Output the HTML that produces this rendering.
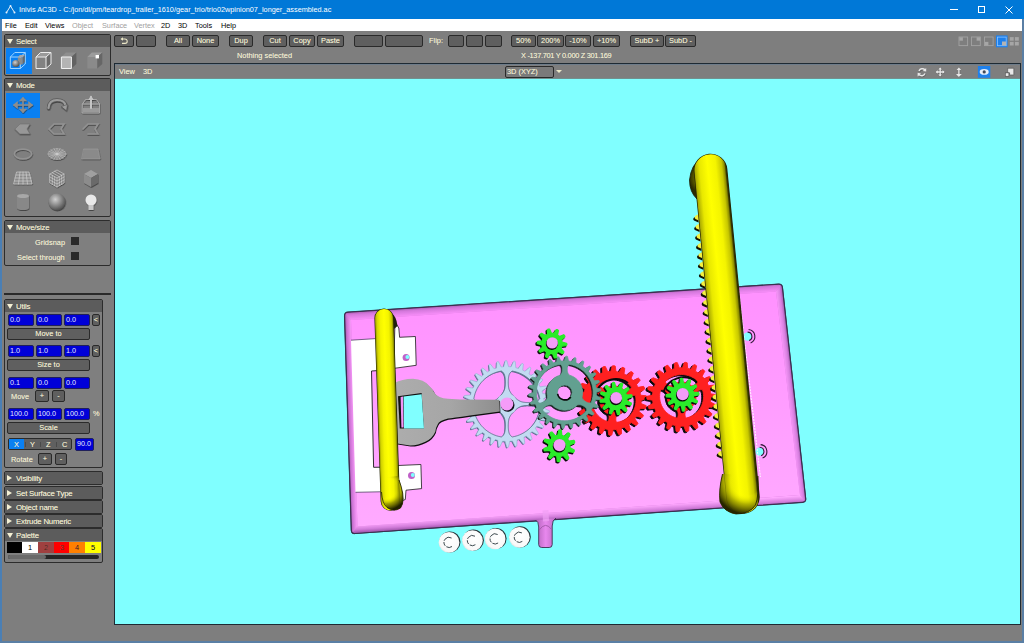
<!DOCTYPE html>
<html><head><meta charset="utf-8">
<style>
*{margin:0;padding:0;box-sizing:border-box}
html,body{width:1024px;height:643px;overflow:hidden;background:#7e7e7e;font-family:"Liberation Sans",sans-serif}
.a{position:absolute}
#title{left:0;top:0;width:1024px;height:19px;background:#0078d7;color:#fff;font-size:7.3px}
#menu{left:1px;top:19px;width:1021px;height:12px;background:#fff;font-size:7.3px;color:#000}
#menu span{position:absolute;top:2px}
#menu .d{color:#a0a0a0}
.bl{left:0;top:19px;width:2px;height:624px;background:#4a7fb5}
.br{left:1022px;top:19px;width:2px;height:624px;background:#5a7fa5}
.bb{left:0;top:641px;width:1024px;height:2px;background:#5a7fa5}
.btn{position:absolute;height:12px;top:35px;background:#5f5f5f;border:1px solid #2a2a2a;border-radius:2px;color:#f0ecd0;font-size:7.4px;text-align:center;line-height:10px;text-shadow:0 0 0.5px rgba(240,236,208,0.6)}
.t{position:absolute;color:#f0ecd0;font-size:7.4px;white-space:pre;line-height:9px;text-shadow:0 0 0.5px rgba(240,236,208,0.6)}
.pnl{position:absolute;left:4px;width:107px;background:#7f7f7f;border:1px solid #2c2c2c;border-radius:2px}
.hd{position:absolute;left:0;top:0;right:0;height:12px;background:#5c5c5c;color:#f0ecd0;font-size:7.8px;letter-spacing:-0.2px;text-shadow:0 0 0.5px rgba(240,236,208,0.6)}
.hd .tri{position:absolute;left:2px;top:4px;width:0;height:0;border-left:3px solid transparent;border-right:3px solid transparent;border-top:5px solid #f4f0d4}
.hd .trr{position:absolute;left:2px;top:2.5px;width:0;height:0;border-top:3.5px solid transparent;border-bottom:3.5px solid transparent;border-left:5.5px solid #f4f0d4}
.hd span{position:absolute;left:11px;top:1.5px;line-height:9px}
.fld{position:absolute;height:12px;background:#0000d8;border:1px solid #20205a;border-radius:2px;color:#e8e8ff;font-size:7.2px;line-height:10px;padding-left:1px}
.ub{position:absolute;height:12px;background:#5f5f5f;border:1px solid #2a2a2a;border-radius:2px;color:#f0ecd0;font-size:7.4px;text-align:center;line-height:10px;text-shadow:0 0 0.5px rgba(240,236,208,0.6)}
</style></head><body>
<div id="title" class="a">
  <svg class="a" style="left:5px;top:4px" width="11" height="10" viewBox="0 0 11 10"><path d="M1.5 8.5 L5.5 2 L9.5 8.5" fill="none" stroke="#e6f0fa" stroke-width="1"/><circle cx="5.5" cy="2" r="1" fill="#e6f0fa"/><circle cx="1.5" cy="8.5" r="1" fill="#e6f0fa"/><circle cx="9.5" cy="8.5" r="1" fill="#e6f0fa"/></svg>
  <span class="a" style="left:19px;top:5px;line-height:9px">Inivis AC3D - C:/jon/dl/pm/teardrop_trailer_1610/gear_trio/trio02wpinion07_longer_assembled.ac</span>
  <div class="a" style="left:950px;top:9px;width:7.5px;height:1px;background:#fff"></div>
  <div class="a" style="left:977.5px;top:6px;width:7px;height:7px;border:1px solid #fff"></div>
  <svg class="a" style="left:1005px;top:5.5px" width="8" height="8" viewBox="0 0 8 8"><path d="M0.5 0.5L7.5 7.5M7.5 0.5L0.5 7.5" stroke="#fff" stroke-width="1"/></svg>
</div>
<div id="menu" class="a">
  <span style="left:4px">File</span><span style="left:24px">Edit</span><span style="left:44px">Views</span><span class="d" style="left:71px">Object</span><span class="d" style="left:101px">Surface</span><span class="d" style="left:133px">Vertex</span><span style="left:160px">2D</span><span style="left:177px">3D</span><span style="left:194px">Tools</span><span style="left:220px">Help</span>
</div>
<div class="a bl"></div><div class="a br"></div><div class="a bb"></div>

<!-- toolbar -->
<div class="btn" style="left:114px;width:20px"><svg width="18" height="10" viewBox="0 0 18 10"><path d="M6.5 3 H10 A2.2 2.2 0 0 1 10 7.4 H7" fill="none" stroke="#ece8c8" stroke-width="1.1"/><path d="M5.5 3 L8 1.2 L8 4.8Z" fill="#ece8c8"/></svg></div>
<div class="btn" style="left:136px;width:20px"></div>
<div class="btn" style="left:166px;width:24px">All</div>
<div class="btn" style="left:192px;width:27px">None</div>
<div class="btn" style="left:229px;width:24px">Dup</div>
<div class="btn" style="left:263px;width:24px">Cut</div>
<div class="btn" style="left:289px;width:26px">Copy</div>
<div class="btn" style="left:317px;width:27px">Paste</div>
<div class="btn" style="left:354px;width:29px"></div>
<div class="btn" style="left:385px;width:38px"></div>
<div class="t" style="left:429px;top:36px">Flip:</div>
<div class="btn" style="left:448px;width:16px"></div>
<div class="btn" style="left:466px;width:17px"></div>
<div class="btn" style="left:485px;width:17px"></div>
<div class="btn" style="left:511px;width:25px">50%</div>
<div class="btn" style="left:537px;width:27px">200%</div>
<div class="btn" style="left:565px;width:26px">-10%</div>
<div class="btn" style="left:593px;width:27px">+10%</div>
<div class="btn" style="left:630px;width:34px">SubD +</div>
<div class="btn" style="left:665px;width:31px">SubD -</div>
<div class="t" style="left:237px;top:51px">Nothing selected</div>
<div class="t" style="left:521px;top:51px;letter-spacing:-0.3px">X -137.701 Y 0.000 Z 301.169</div>

<!-- layout icons -->
<svg class="a" style="left:950px;top:32px" width="74" height="18" viewBox="950 32 74 18">
 <g fill="none" stroke="#a2a2a2" stroke-width="0.9">
  <rect x="959" y="37" width="8.6" height="8.6"/>
  <rect x="971.5" y="37" width="8.8" height="8.6"/>
  <rect x="984.5" y="37" width="8.6" height="8.6"/>
 </g>
 <g fill="#a6a6a6">
  <rect x="959.3" y="37.3" width="3.6" height="3.4"/>
  <rect x="976.6" y="37.3" width="3.6" height="3.4"/>
  <rect x="984.8" y="41.9" width="3.6" height="3.6"/>
 </g>
 <rect x="996" y="35.4" width="11.6" height="11.9" fill="#1e80ec"/>
 <rect x="997.6" y="37.1" width="8.6" height="8.6" fill="none" stroke="#8cc4ff" stroke-width="0.8"/>
 <rect x="1002" y="41.5" width="4" height="4" fill="#b4b4b4"/>
 <g fill="#a6a6a6">
  <rect x="1009.8" y="37.1" width="3.9" height="3.6"/>
  <rect x="1014.9" y="37.1" width="3.9" height="3.6"/>
  <rect x="1009.8" y="41.9" width="3.9" height="3.6"/>
  <rect x="1014.9" y="41.9" width="3.9" height="3.6"/>
 </g>
</svg>



<!-- left panels -->
<!-- Select panel -->
<div class="pnl" style="top:34px;height:42px"><div class="hd"><div class="tri"></div><span>Select</span></div></div>
<div class="a" style="left:6px;top:48px;width:26px;height:26px;background:#0a80f2"></div>
<svg class="a" style="left:6px;top:48px" width="104" height="26" viewBox="0 0 104 26">
 <defs>
  <linearGradient id="cf" x1="0" y1="0" x2="1" y2="1"><stop offset="0" stop-color="#9a9a9a"/><stop offset="1" stop-color="#6a6a6a"/></linearGradient>
  <linearGradient id="cs" x1="0" y1="0" x2="1" y2="0"><stop offset="0" stop-color="#8a8a8a"/><stop offset="1" stop-color="#5a5a5a"/></linearGradient>
  <radialGradient id="sph" cx="0.4" cy="0.35" r="0.65"><stop offset="0" stop-color="#d0d0d0"/><stop offset="1" stop-color="#505050"/></radialGradient>
 </defs>
 <g transform="translate(12.8,12.5)">
  <path d="M-8.5 -3.5 L1.5 -3.5 L1.5 8 L-8.5 8Z M-8.5 -3.5 L-4 -8 L6.5 -8 L1.5 -3.5 M1.5 8 L6.5 3.5 L6.5 -8" fill="none" stroke="#9fd4ff" stroke-width="1"/>
  <path d="M-1 -3 L4 -3 L4 4 L-1 4Z" fill="#8c8c8c"/><path d="M-1 -3 L1 -5.5 L6 -5.5 L4 -3Z" fill="#a8a8a8"/><path d="M4 -3 L6 -5.5 L6 1.5 L4 4Z" fill="#6a6a6a"/>
  <circle cx="-3" cy="3" r="3.6" fill="url(#sph)"/>
 </g>
 <g transform="translate(38.5,12.5)">
  <path d="M-8.5 -3.5 L1.5 -3.5 L1.5 8 L-8.5 8Z" fill="#828282"/>
  <path d="M-8.5 -3.5 L-4 -8 L6.5 -8 L1.5 -3.5Z" fill="#9a9a9a"/>
  <path d="M1.5 -3.5 L6.5 -8 L6.5 3.5 L1.5 8Z" fill="#6a6a6a"/>
  <path d="M-8.5 -3.5 L1.5 -3.5 L1.5 8 L-8.5 8Z M-8.5 -3.5 L-4 -8 L6.5 -8 L1.5 -3.5 M1.5 8 L6.5 3.5 L6.5 -8" fill="none" stroke="#eeeeee" stroke-width="1" stroke-linejoin="round"/>
 </g>
 <g transform="translate(63.9,12.5)">
  <path d="M-8.5 -3.5 L-4 -8 L6.5 -8 L1.5 -3.5Z" fill="#8e8e8e"/>
  <path d="M1.5 -3.5 L6.5 -8 L6.5 3.5 L1.5 8Z" fill="#626262"/>
  <path d="M-8.5 -3.5 L1.5 -3.5 L1.5 8 L-8.5 8Z" fill="#b4b4b4" stroke="#f2f2f2" stroke-width="1"/>
 </g>
 <g transform="translate(89.8,12.5)">
  <path d="M-8.5 -3.5 L1.5 -3.5 L1.5 8 L-8.5 8Z" fill="#8a8a8a"/>
  <path d="M-8.5 -3.5 L-4 -8 L6.5 -8 L1.5 -3.5Z" fill="#9c9c9c"/>
  <path d="M1.5 -3.5 L6.5 -8 L6.5 3.5 L1.5 8Z" fill="#666"/>
  <rect x="-0.2" y="-5.5" width="3.4" height="3.4" fill="#fff"/>
 </g>
</svg>

<!-- Mode panel -->
<div class="pnl" style="top:78px;height:139px"><div class="hd"><div class="tri"></div><span>Mode</span></div></div>
<div class="a" style="left:6px;top:93px;width:34px;height:25px;background:#0a80f2"></div>
<svg class="a" style="left:4px;top:91px" width="106" height="124" viewBox="0 0 106 124">
 <defs><filter id="ds" x="-10%" y="-10%" width="120%" height="120%"><feDropShadow dx="0.4" dy="0.9" stdDeviation="0.5" flood-color="#2a2a2a" flood-opacity="0.75"/></filter></defs>
 <g fill="none" stroke-linecap="round" filter="url(#ds)">
 <!-- row1 -->
 <g transform="translate(19,14)" stroke="#8e8e8e" stroke-width="1.5">
   <path d="M-9 0 H9 M0 -7 V7"/>
   <path d="M-9 0 L-6 -2.5 L-6 2.5Z M9 0 L6 -2.5 L6 2.5Z M0 -7 L-2.5 -4.5 L2.5 -4.5Z M0 7 L-2.5 4.5 L2.5 4.5Z" fill="#8e8e8e"/>
 </g>
 <g transform="translate(53,14)">
   <path d="M-8.5 3 Q-8 -5 0 -5 Q8 -5 8.5 1" fill="none" stroke="#5a5a5a" stroke-width="3.4" stroke-linecap="round"/>
   <path d="M-8.5 3 Q-8 -5 0 -5 Q8 -5 8.5 1" fill="none" stroke="#9c9c9c" stroke-width="2.2" stroke-linecap="round"/>
   <path d="M4.5 1.5 L10.5 -0.5 L9.5 5.5Z" fill="#9c9c9c" stroke="#5a5a5a" stroke-width="0.6"/>
 </g>
 <g transform="translate(87,14)">
   <path d="M-8.5 -1 L-5.5 -5.5 L5.5 -5.5 L8.5 -1 L8.5 8 L-8.5 8Z" fill="none" stroke="#b4b4b4" stroke-width="0.8"/>
   <path d="M-8.5 -1 L8.5 -1" stroke="#b4b4b4" stroke-width="0.8"/>
   <path d="M-8 3 L8 3 L8 7.6 L-8 7.6Z" fill="#9a9a9a"/>
   <path d="M0 -8 V3" stroke="#c4c4c4" stroke-width="2" fill="none"/>
   <path d="M-2.8 -5 L0 -9.5 L2.8 -5Z" fill="#c4c4c4"/>
 </g>
 <!-- row2 -->
 <g transform="translate(19,38)">
   <path d="M-8 0 L-3 -5 L7 -5 L4 0 L7 5 L-3 5Z" fill="#979797" stroke="#707070" stroke-width="0.6"/>
 </g>
 <g transform="translate(53,38)" stroke="#929292" stroke-width="1.7">
   <path d="M-8 0 L-3 -5 L7 -5 L4 0 L7 5 L-3 5Z"/>
 </g>
 <g transform="translate(87,38)" stroke="#929292" stroke-width="1.7">
   <path d="M-8 0 L-3 -5 L7 -5 L4 0 L7 5 L-3 5"/>
 </g>
 <!-- row3 -->
 <ellipse cx="19" cy="63" rx="8.6" ry="4.8" stroke="#929292" stroke-width="1.7"/>
 <g transform="translate(53,63)">
   <ellipse rx="9" ry="5.5" fill="#8a8a8a" stroke="#a8a8a8" stroke-width="0.6"/>
   <path d="M-9 0H9M0 -5.5V5.5M-6 -4L6 4M-6 4L6 -4M-8 -2.5L8 2.5M-8 2.5L8 -2.5M-3 -5.3L3 5.3M3 -5.3L-3 5.3" stroke="#d0d0d0" stroke-width="0.5"/>
 </g>
 <path d="M80 58 L94 58 L96 68 L78 68Z" fill="#8a8a8a" stroke="#a0a0a0" stroke-width="0.6"/>
 <!-- row4 -->
 <g transform="translate(19,87)" stroke="#d8d8d8" stroke-width="0.6">
   <path d="M-6 -6 L6 -6 L9 6 L-9 6Z" fill="#8a8a8a"/>
   <path d="M-3 -6 L-4.5 6 M0 -6 V6 M3 -6 L4.5 6 M-7 -3 H7 M-8 0 H8 M-8.5 3 H8.5"/>
 </g>
 <g transform="translate(53,87)" stroke="#d8d8d8" stroke-width="0.6">
   <path d="M-7 -4 L0 -8 L7 -4 L7 5 L0 9 L-7 5Z" fill="#7a7a7a"/>
   <path d="M-7 -4 L0 0 L7 -4 M0 0 V9 M-4.7 -5.3 L2.3 -1.3 L2.3 7.7 M-2.3 -6.7 L4.7 -2.7 M-7 -1 L0 3 L7 -1 M-7 2 L0 6 L7 2 M-4.7 -2.7 V6.3 M-2.3 -1.3 V7.7 M4.7 -2.7 V6.3"/>
 </g>
 <g transform="translate(87,87)">
   <path d="M-7 -4 L0 -8 L7 -4 L0 0Z" fill="#a0a0a0"/>
   <path d="M7 -4 L0 0 L0 9 L7 5Z" fill="#6a6a6a"/>
   <path d="M-7 -4 L0 0 L0 9 L-7 5Z" fill="#8c8c8c"/>
 </g>
 <!-- row5 -->
 <g transform="translate(19,111)">
   <path d="M-6 -6 V6 A6 2 0 0 0 6 6 V-6Z" fill="#888"/>
   <ellipse cy="-6" rx="6" ry="2" fill="#a8a8a8"/>
 </g>
 <circle cx="53" cy="111" r="8.5" fill="url(#sph)"/>
 <g transform="translate(87,111)">
   <circle cy="-2" r="5.5" fill="#e8e8e8"/>
   <rect x="-2.5" y="3" width="5" height="5" fill="#c8c8c8"/>
 </g>
 </g>
</svg>

<!-- Move/size panel -->
<div class="pnl" style="top:220px;height:46px"><div class="hd"><div class="tri"></div><span>Move/size</span></div></div>
<div class="t" style="left:35px;top:238px">Gridsnap</div>
<div class="a" style="left:71px;top:237px;width:8px;height:8px;background:#2a2a2a"></div>
<div class="t" style="left:17px;top:253px">Select through</div>
<div class="a" style="left:71px;top:252px;width:8px;height:8px;background:#2a2a2a"></div>

<div class="a" style="left:4px;top:293px;width:107px;height:2px;background:#2a2a2a"></div>

<!-- Utils -->
<div class="pnl" style="top:299px;width:99px;height:169px"><div class="hd"><div class="tri"></div><span>Utils</span></div></div>
<div class="fld" style="left:8px;top:314px;width:26px">0.0</div>
<div class="fld" style="left:36px;top:314px;width:26px">0.0</div>
<div class="fld" style="left:64px;top:314px;width:26px">0.0</div>
<div class="ub" style="left:92px;top:314px;width:8px">&lt;</div>
<div class="ub" style="left:7px;top:328px;width:83px">Move to</div>
<div class="fld" style="left:8px;top:345px;width:26px">1.0</div>
<div class="fld" style="left:36px;top:345px;width:26px">1.0</div>
<div class="fld" style="left:64px;top:345px;width:26px">1.0</div>
<div class="ub" style="left:92px;top:345px;width:8px">&lt;</div>
<div class="ub" style="left:7px;top:359px;width:83px">Size to</div>
<div class="fld" style="left:8px;top:377px;width:26px">0.1</div>
<div class="fld" style="left:36px;top:377px;width:26px">0.0</div>
<div class="fld" style="left:64px;top:377px;width:26px">0.0</div>
<div class="t" style="left:11px;top:392px">Move</div>
<div class="ub" style="left:35px;top:390px;width:14px">+</div>
<div class="ub" style="left:52px;top:390px;width:13px">-</div>
<div class="fld" style="left:8px;top:408px;width:26px">100.0</div>
<div class="fld" style="left:36px;top:408px;width:26px">100.0</div>
<div class="fld" style="left:64px;top:408px;width:26px">100.0</div>
<div class="t" style="left:93px;top:409px">%</div>
<div class="ub" style="left:7px;top:422px;width:83px">Scale</div>
<div class="ub" style="left:8px;top:438px;width:64px;background:#606060"></div>
<div class="a" style="left:9px;top:439px;width:15px;height:10px;background:#0a80f2"></div>
<div class="t" style="left:14px;top:440px">X</div>
<div class="t" style="left:30px;top:440px">Y</div>
<div class="t" style="left:46px;top:440px">Z</div>
<div class="t" style="left:62px;top:440px">C</div>
<div class="a" style="left:25px;top:442px;width:1px;height:5px;background:#4a4a4a"></div>
<div class="a" style="left:40px;top:442px;width:1px;height:5px;background:#4a4a4a"></div>
<div class="a" style="left:56px;top:442px;width:1px;height:5px;background:#4a4a4a"></div>
<div class="fld" style="left:75px;top:438px;width:19px;height:13px">90.0</div>
<div class="t" style="left:11px;top:455px">Rotate</div>
<div class="ub" style="left:38px;top:453px;width:14px">+</div>
<div class="ub" style="left:55px;top:453px;width:12px">-</div>

<!-- collapsed panels -->
<div class="pnl" style="top:471px;width:99px;height:14px;background:#5c5c5c"><div class="hd" style="height:12px"><div class="trr"></div><span>Visibility</span></div></div>
<div class="pnl" style="top:486px;width:99px;height:14px;background:#5c5c5c"><div class="hd" style="height:12px"><div class="trr"></div><span>Set Surface Type</span></div></div>
<div class="pnl" style="top:500px;width:99px;height:14px;background:#5c5c5c"><div class="hd" style="height:12px"><div class="trr"></div><span>Object name</span></div></div>
<div class="pnl" style="top:514px;width:99px;height:14px;background:#5c5c5c"><div class="hd" style="height:12px"><div class="trr"></div><span>Extrude Numeric</span></div></div>
<div class="pnl" style="top:528px;width:99px;height:35px"><div class="hd"><div class="tri"></div><span>Palette</span></div></div>
<div class="a" style="left:7px;top:542px;width:15px;height:11px;background:#000"></div>
<div class="a" style="left:22px;top:542px;width:16px;height:11px;background:#fff"></div>
<div class="a" style="left:38px;top:542px;width:16px;height:11px;background:#a04040"></div>
<div class="a" style="left:54px;top:542px;width:15px;height:11px;background:#ff0000"></div>
<div class="a" style="left:69px;top:542px;width:16px;height:11px;background:#ff8000"></div>
<div class="a" style="left:85px;top:542px;width:16px;height:11px;background:#ffff00"></div>
<div class="t" style="left:28px;top:543px;color:#000">1</div>
<div class="t" style="left:44px;top:543px;color:#400">2</div>
<div class="t" style="left:60px;top:543px;color:#600">3</div>
<div class="t" style="left:75px;top:543px;color:#400">4</div>
<div class="t" style="left:91px;top:543px;color:#000">5</div>
<div class="a" style="left:8px;top:555px;width:91px;height:4px;background:#262626;border-radius:2px"></div>
<div class="a" style="left:8px;top:555px;width:38px;height:4px;background:#6a6a6a;border-radius:2px"></div>


<!-- viewport -->
<div class="a" style="left:114px;top:63px;width:907px;height:562px;border:1px solid #1e2a33;background:#80ffff">
  <div class="a" style="left:0;top:0;width:905px;height:15px;background:#7e7e7e;border-top:1px solid #6e7c8a;border-bottom:1px solid #72908e"></div>
</div>
<div class="t" style="left:119px;top:67px">View</div>
<div class="t" style="left:143px;top:67px">3D</div>
<div class="a" style="left:505px;top:66px;width:49px;height:12px;background:#7a7a7a;border:1px solid #2a2a2a;border-radius:2px"></div>
<div class="t" style="left:507px;top:67px">3D (XYZ)</div>
<div class="a" style="left:556px;top:70px;width:0;height:0;border-left:3px solid transparent;border-right:3px solid transparent;border-top:3px solid #ece8c8"></div>

<svg class="a" style="left:910px;top:64px" width="110" height="15" viewBox="910 64 110 15">
 <g fill="none" stroke="#404040" stroke-width="1.9" opacity="0.5" transform="translate(0.4,0.6)">
  <path d="M919 71 A3.6 3.6 0 0 1 925 70 M925 73.5 A3.6 3.6 0 0 1 919 74.5"/>
  <path d="M936.4 72 H944 M940.2 68.2 V75.8"/>
  <path d="M958.9 68.5 V76"/>
 </g>
 <g fill="none" stroke="#e8e8e8" stroke-width="1.5">
  <path d="M919 71 A3.6 3.6 0 0 1 925 70"/>
  <path d="M925 73.5 A3.6 3.6 0 0 1 919 74.5"/>
  <path d="M936.4 72 H944 M940.2 68.2 V75.8" stroke-width="1.3"/>
  <path d="M958.9 69 V75.5" stroke-width="1.4"/>
 </g>
 <g fill="#e8e8e8">
  <path d="M926.2 67.9 L926.2 71.6 L922.7 71Z"/>
  <path d="M917.6 76.4 L917.6 72.7 L921 73.4Z"/>
  <path d="M935.8 72 L937.8 70.3 L937.8 73.7Z M944.6 72 L942.6 70.3 L942.6 73.7Z M940.2 67.6 L938.5 69.6 L941.9 69.6Z M940.2 76.4 L938.5 74.4 L941.9 74.4Z"/>
  <path d="M958.9 67.6 L956.6 70 L961.2 70Z M958.9 77 L956 74 L961.8 74Z"/>
 </g>
 <rect x="977.9" y="66" width="12.4" height="11.8" fill="#1e80ec"/>
 <ellipse cx="984.2" cy="71.9" rx="4.5" ry="2.8" fill="#e8eef8"/>
 <circle cx="984.2" cy="71.9" r="1.6" fill="#404858"/>
 <g fill="#e8e8e8" stroke="#3a3a3a" stroke-width="0.5">
  <path d="M1007.7 68.3 H1013.8 V74.9 H1009.6 V72.8 H1007.7Z"/>
  <rect x="1005.3" y="72.9" width="3.6" height="3.3"/>
 </g>
</svg>
<svg class="a" style="left:0;top:0" width="1024" height="643" viewBox="0 0 1024 643"><defs>
<linearGradient id="gTop" gradientUnits="userSpaceOnUse" x1="560" y1="298" x2="560.6" y2="307"><stop offset="0" stop-color="#a85cb0"/><stop offset="0.3" stop-color="#d478dc"/><stop offset="1" stop-color="#ff92ff"/></linearGradient>
<linearGradient id="gLeft" gradientUnits="userSpaceOnUse" x1="347.8" y1="420" x2="354.5" y2="419.8"><stop offset="0" stop-color="#a458b0"/><stop offset="0.3" stop-color="#cc74d4"/><stop offset="1" stop-color="#ff9eff"/></linearGradient>
<linearGradient id="gBot" gradientUnits="userSpaceOnUse" x1="578" y1="517.9" x2="577.5" y2="510.2"><stop offset="0" stop-color="#a85cb4"/><stop offset="0.35" stop-color="#d27cda"/><stop offset="1" stop-color="#ffa8ff"/></linearGradient>
<linearGradient id="gRight" gradientUnits="userSpaceOnUse" x1="794" y1="393" x2="787" y2="393.8"><stop offset="0" stop-color="#a85cb4"/><stop offset="0.35" stop-color="#d880e0"/><stop offset="1" stop-color="#ff9cff"/></linearGradient>
<linearGradient id="hL" gradientUnits="userSpaceOnUse" x1="377.9" y1="409.8" x2="396.5" y2="409.2"><stop offset="0" stop-color="#8a8a00"/><stop offset="0.1" stop-color="#d4d400"/><stop offset="0.28" stop-color="#f4f400"/><stop offset="0.48" stop-color="#ffff00"/><stop offset="0.72" stop-color="#f4f400"/><stop offset="0.88" stop-color="#cccc00"/><stop offset="0.96" stop-color="#8a8a00"/><stop offset="1" stop-color="#404000"/></linearGradient>
<linearGradient id="hR" gradientUnits="userSpaceOnUse" x1="709.4" y1="335.6" x2="742" y2="332.4"><stop offset="0" stop-color="#606000"/><stop offset="0.06" stop-color="#b0b000"/><stop offset="0.2" stop-color="#e8e800"/><stop offset="0.45" stop-color="#ffff00"/><stop offset="0.7" stop-color="#f4f400"/><stop offset="0.88" stop-color="#c8c800"/><stop offset="0.96" stop-color="#8a8a00"/><stop offset="1" stop-color="#303000"/></linearGradient>
<radialGradient id="rbTop" gradientUnits="userSpaceOnUse" cx="706" cy="178" r="17"><stop offset="0" stop-color="#c8c800"/><stop offset="0.6" stop-color="#6a6a00"/><stop offset="1" stop-color="#2a2a00"/></radialGradient>
<radialGradient id="rbBot" gradientUnits="userSpaceOnUse" cx="747" cy="481" r="33"><stop offset="0" stop-color="#ffff00" stop-opacity="0"/><stop offset="0.42" stop-color="#ffff00" stop-opacity="0"/><stop offset="0.7" stop-color="#a0a000" stop-opacity="0.8"/><stop offset="1" stop-color="#262600"/></radialGradient>
<radialGradient id="lbBot" gradientUnits="userSpaceOnUse" cx="386" cy="488" r="22"><stop offset="0" stop-color="#ffff00" stop-opacity="0"/><stop offset="0.45" stop-color="#ffff00" stop-opacity="0"/><stop offset="0.72" stop-color="#909000" stop-opacity="0.85"/><stop offset="1" stop-color="#202000"/></radialGradient>
<linearGradient id="face" gradientUnits="userSpaceOnUse" x1="0" y1="300" x2="0" y2="525"><stop offset="0" stop-color="#ff92ff"/><stop offset="1" stop-color="#ffaaff"/></linearGradient>
<linearGradient id="wrg" gradientUnits="userSpaceOnUse" x1="400" y1="0" x2="500" y2="0"><stop offset="0" stop-color="#acacac"/><stop offset="0.5" stop-color="#a6a6a6"/><stop offset="1" stop-color="#8e8e8e"/></linearGradient>
<linearGradient id="tabg" x1="0" y1="0" x2="1" y2="0"><stop offset="0" stop-color="#b060b8"/><stop offset="0.5" stop-color="#e888ee"/><stop offset="1" stop-color="#b868c0"/></linearGradient>
<radialGradient id="wsh" cx="0.6" cy="0.4" r="0.65"><stop offset="0" stop-color="#ffffff"/><stop offset="0.85" stop-color="#f8f8f8"/><stop offset="1" stop-color="#e4e4e4"/></radialGradient>
<clipPath id="vp"><rect x="115" y="79" width="905" height="545"/></clipPath>
</defs>
<g clip-path="url(#vp)">
<clipPath id="plc"><path d="M344.61 316 Q344.5 312.5 347.99 312.27 L778.51 284.23 Q782 284 782.38 287.48 L805.62 498.52 Q806 502 802.51 502.24 L354.99 533.46 Q351.5 533.7 351.39 530.2Z"/></clipPath>
<path d="M344.61 316 Q344.5 312.5 347.99 312.27 L778.51 284.23 Q782 284 782.38 287.48 L805.62 498.52 Q806 502 802.51 502.24 L354.99 533.46 Q351.5 533.7 351.39 530.2Z" fill="#d070d6" stroke="#3a3050" stroke-width="1.3"/>
<g clip-path="url(#plc)">
<path d="M344.5 312.5 L782 284 L776 291.5 L351 320Z" fill="url(#gTop)"/>
<path d="M782 284 L806 502 L800 495 L776 291.5Z" fill="url(#gRight)"/>
<path d="M351.5 533.7 L357.5 526.5 L800 495 L806 502Z" fill="url(#gBot)"/>
<path d="M344.5 312.5 L351 320 L357.5 526.5 L351.5 533.7Z" fill="url(#gLeft)"/>
<path d="M351 320 L776 291.5 L800 495 L357.5 526.5Z" fill="url(#face)"/>
</g>
<path d="M344.61 316 Q344.5 312.5 347.99 312.27 L778.51 284.23 Q782 284 782.38 287.48 L805.62 498.52 Q806 502 802.51 502.24 L354.99 533.46 Q351.5 533.7 351.39 530.2Z" fill="none" stroke="#3a3050" stroke-width="1.1"/>
<path d="M535.5 520 Q538.7 521.5 538.7 527 L538.7 544.5 Q538.7 547.5 541.7 547.5 L549.2 547.5 Q552.2 547.5 552.2 544.5 L552.2 526 Q552.2 520 556 518" fill="url(#tabg)" stroke="#3a3050" stroke-width="0.9"/>
<path d="M542.5 510.5 L548.5 510 L549 521 L543 521.5Z" fill="#f0a0f4" opacity="0.7"/>
<path d="M539.2 530 Q545.5 521 551.7 529.5" fill="none" stroke="#a058a8" stroke-width="0.9"/>
<circle cx="449.9" cy="542" r="10.6" fill="#26343a"/>
<circle cx="449" cy="542.4" r="10.4" fill="url(#wsh)"/>
<path d="M451.6 538 A5.1 5.1 0 1 0 452 546.5" fill="none" stroke="#26343a" stroke-width="0.9" stroke-dasharray="9 1.2 4 1.5"/>
<circle cx="473.3" cy="540.2" r="10.6" fill="#26343a"/>
<circle cx="472.4" cy="540.6" r="10.4" fill="url(#wsh)"/>
<path d="M475 536.2 A5.1 5.1 0 1 0 475.4 544.7" fill="none" stroke="#26343a" stroke-width="0.9" stroke-dasharray="9 1.2 4 1.5"/>
<circle cx="496" cy="538.5" r="10.6" fill="#26343a"/>
<circle cx="495.1" cy="538.9" r="10.4" fill="url(#wsh)"/>
<path d="M497.7 534.5 A5.1 5.1 0 1 0 498.1 543" fill="none" stroke="#26343a" stroke-width="0.9" stroke-dasharray="9 1.2 4 1.5"/>
<circle cx="520.2" cy="536.9" r="10.6" fill="#26343a"/>
<circle cx="519.3" cy="537.3" r="10.4" fill="url(#wsh)"/>
<path d="M521.9 532.9 A5.1 5.1 0 1 0 522.3 541.4" fill="none" stroke="#26343a" stroke-width="0.9" stroke-dasharray="9 1.2 4 1.5"/>
<path d="M351 340.2 L393 337.5 L394 491.5 L355.5 492.3Z M371.5 371 L394 369.5 L394 467 L373.6 467.3Z" fill="#ffffff" fill-rule="evenodd"/>
<path d="M371.5 371 L394 369.5 M371.5 371 L373.6 467.3 L394 467" fill="none" stroke="#1a1a1a" stroke-width="0.9"/>
<path d="M351 340.2 L393 337.5 M355.5 492.3 L394 491.5" fill="none" stroke="#3a3050" stroke-width="0.7"/>
<circle cx="747.6" cy="336.5" r="4.2" fill="#80ffff"/>
<path d="M747.6 332.1 A4.4 4.4 0 0 1 749.1 340.6" fill="none" stroke="#301838" stroke-width="1.1"/>
<path d="M748.6 329.5 A7 7 0 0 1 750.6 342.9" fill="none" stroke="#301838" stroke-width="1.1"/>
<circle cx="759.6" cy="451.6" r="4.2" fill="#80ffff"/>
<path d="M759.6 447.2 A4.4 4.4 0 0 1 761.1 455.7" fill="none" stroke="#301838" stroke-width="1.1"/>
<path d="M760.6 444.6 A7 7 0 0 1 762.6 458" fill="none" stroke="#301838" stroke-width="1.1"/>
<path d="M395 321.8 L398.8 328 L399.6 337.3 L415.4 336.5 L416.2 365.3 L393.7 368.4Z" fill="#fff" stroke="#1a1a1a" stroke-width="0.8"/>
<circle cx="406.1" cy="357.5" r="3.5" fill="#c060c8"/><circle cx="407.4" cy="357" r="2" fill="#80ffff"/>
<path d="M396 465.6 L420.9 464.5 L421.6 488.6 L406 490.2 L405.3 499.5 L396 503Z" fill="#fff" stroke="#1a1a1a" stroke-width="0.8"/>
<circle cx="411.5" cy="475.4" r="3.5" fill="#c060c8"/><circle cx="412.8" cy="475" r="2" fill="#80ffff"/>
<path d="M544.08 406.99 L544.03 407.61 L543.96 408.23 L549.46 410.82 L549.61 411.71 L549.16 412.49 L543.1 413 L542.78 414.2 L542.61 414.8 L542.42 415.4 L547.31 419.01 L547.28 419.91 L546.69 420.59 L540.65 419.91 L540.1 421.03 L539.81 421.58 L539.51 422.13 L543.6 426.63 L543.4 427.51 L542.68 428.05 L536.89 426.2 L536.14 427.2 L535.75 427.68 L535.35 428.16 L538.48 433.37 L538.11 434.2 L537.3 434.59 L531.98 431.65 L531.05 432.47 L530.57 432.88 L530.08 433.27 L532.14 438.99 L531.62 439.72 L530.75 439.95 L526.11 436.03 L525.03 436.66 L524.48 436.96 L523.93 437.25 L524.83 443.26 L524.17 443.88 L523.27 443.94 L519.49 439.18 L518.31 439.59 L517.71 439.77 L517.11 439.95 L516.82 446.02 L516.06 446.5 L515.17 446.38 L512.38 440.98 L511.14 441.15 L510.52 441.21 L509.9 441.27 L508.43 447.17 L507.59 447.49 L506.74 447.2 L505.06 441.36 L503.81 441.28 L503.19 441.23 L502.57 441.16 L499.98 446.66 L499.09 446.81 L498.31 446.36 L497.8 440.3 L496.6 439.98 L496 439.81 L495.4 439.62 L491.79 444.51 L490.89 444.48 L490.21 443.89 L490.89 437.85 L489.77 437.3 L489.22 437.01 L488.67 436.71 L484.17 440.8 L483.29 440.6 L482.75 439.88 L484.6 434.09 L483.6 433.34 L483.12 432.95 L482.64 432.55 L477.43 435.68 L476.6 435.31 L476.21 434.5 L479.15 429.18 L478.33 428.25 L477.92 427.77 L477.53 427.28 L471.81 429.34 L471.08 428.82 L470.85 427.95 L474.77 423.31 L474.14 422.23 L473.84 421.68 L473.55 421.13 L467.54 422.03 L466.92 421.37 L466.86 420.47 L471.62 416.69 L471.21 415.51 L471.03 414.91 L470.85 414.31 L464.78 414.02 L464.3 413.26 L464.42 412.37 L469.82 409.58 L469.65 408.34 L469.59 407.72 L469.53 407.1 L463.63 405.63 L463.31 404.79 L463.6 403.94 L469.44 402.26 L469.52 401.01 L469.57 400.39 L469.64 399.77 L464.14 397.18 L463.99 396.29 L464.44 395.51 L470.5 395 L470.82 393.8 L470.99 393.2 L471.18 392.6 L466.29 388.99 L466.32 388.09 L466.91 387.41 L472.95 388.09 L473.5 386.97 L473.79 386.42 L474.09 385.87 L470 381.37 L470.2 380.49 L470.92 379.95 L476.71 381.8 L477.46 380.8 L477.85 380.32 L478.25 379.84 L475.12 374.63 L475.49 373.8 L476.3 373.41 L481.62 376.35 L482.55 375.53 L483.03 375.12 L483.52 374.73 L481.46 369.01 L481.98 368.28 L482.85 368.05 L487.49 371.97 L488.57 371.34 L489.12 371.04 L489.67 370.75 L488.77 364.74 L489.43 364.12 L490.33 364.06 L494.11 368.82 L495.29 368.41 L495.89 368.23 L496.49 368.05 L496.78 361.98 L497.54 361.5 L498.43 361.62 L501.22 367.02 L502.46 366.85 L503.08 366.79 L503.7 366.73 L505.17 360.83 L506.01 360.51 L506.86 360.8 L508.54 366.64 L509.79 366.72 L510.41 366.77 L511.03 366.84 L513.62 361.34 L514.51 361.19 L515.29 361.64 L515.8 367.7 L517 368.02 L517.6 368.19 L518.2 368.38 L521.81 363.49 L522.71 363.52 L523.39 364.11 L522.71 370.15 L523.83 370.7 L524.38 370.99 L524.93 371.29 L529.43 367.2 L530.31 367.4 L530.85 368.12 L529 373.91 L530 374.66 L530.48 375.05 L530.96 375.45 L536.17 372.32 L537 372.69 L537.39 373.5 L534.45 378.82 L535.27 379.75 L535.68 380.23 L536.07 380.72 L541.79 378.66 L542.52 379.18 L542.75 380.05 L538.83 384.69 L539.46 385.77 L539.76 386.32 L540.05 386.87 L546.06 385.97 L546.68 386.63 L546.74 387.53 L541.98 391.31 L542.39 392.49 L542.57 393.09 L542.75 393.69 L548.82 393.98 L549.3 394.74 L549.18 395.63 L543.78 398.42 L543.95 399.66 L544.01 400.28 L544.07 400.9 L549.97 402.37 L550.29 403.21 L550 404.06 L544.16 405.74Z M512.31 395.06 L511.19 393.42 L510.33 392.1 L509.7 390.96 L509.25 389.89 L508.92 388.88 L508.69 387.89 L508.53 386.91 L508.42 385.94 L508.34 384.98 L508.3 384.01 L508.27 383.06 L508.27 382.1 L508.28 381.14 L508.31 380.19 L508.37 379.24 L508.45 378.29 L508.57 377.34 L508.73 376.39 L508.96 375.45 L509.28 374.52 L509.72 373.6 L510.32 372.71 L511.14 371.85 L512.28 371.05 L514.81 371.58 L517.3 372.29 L519.73 373.2 L522.08 374.3 L524.33 375.57 L526.48 377.02 L528.52 378.62 L530.42 380.38 L532.18 382.28 L533.78 384.32 L535.23 386.47 L536.5 388.72 L537.6 391.07 L538.51 393.5 L539.22 395.99 L539.75 398.52 L538.95 399.66 L538.09 400.48 L537.2 401.08 L536.28 401.52 L535.35 401.84 L534.41 402.07 L533.46 402.23 L532.51 402.35 L531.56 402.43 L530.61 402.49 L529.66 402.52 L528.7 402.53 L527.74 402.53 L526.79 402.5 L525.82 402.46 L524.86 402.38 L523.89 402.27 L522.91 402.11 L521.92 401.88 L520.91 401.55 L519.84 401.1 L518.7 400.47 L517.38 399.61 L515.74 398.49 L515.57 398.23 L515.4 397.98 L515.22 397.73 L515.04 397.49 L514.84 397.25 L514.64 397.02 L514.44 396.79 L514.22 396.58 L514.01 396.36 L513.78 396.16 L513.55 395.96 L513.31 395.76 L513.07 395.58 L512.82 395.4 L512.57 395.23Z M515.74 409.51 L517.38 408.39 L518.7 407.53 L519.84 406.9 L520.91 406.45 L521.92 406.12 L522.91 405.89 L523.89 405.73 L524.86 405.62 L525.82 405.54 L526.79 405.5 L527.74 405.47 L528.7 405.47 L529.66 405.48 L530.61 405.51 L531.56 405.57 L532.51 405.65 L533.46 405.77 L534.41 405.93 L535.35 406.16 L536.28 406.48 L537.2 406.92 L538.09 407.52 L538.95 408.34 L539.75 409.48 L539.22 412.01 L538.51 414.5 L537.6 416.93 L536.5 419.28 L535.23 421.53 L533.78 423.68 L532.18 425.72 L530.42 427.62 L528.52 429.38 L526.48 430.98 L524.33 432.43 L522.08 433.7 L519.73 434.8 L517.3 435.71 L514.81 436.42 L512.28 436.95 L511.14 436.15 L510.32 435.29 L509.72 434.4 L509.28 433.48 L508.96 432.55 L508.73 431.61 L508.57 430.66 L508.45 429.71 L508.37 428.76 L508.31 427.81 L508.28 426.86 L508.27 425.9 L508.27 424.94 L508.3 423.99 L508.34 423.02 L508.42 422.06 L508.53 421.09 L508.69 420.11 L508.92 419.12 L509.25 418.11 L509.7 417.04 L510.33 415.9 L511.19 414.58 L512.31 412.94 L512.57 412.77 L512.82 412.6 L513.07 412.42 L513.31 412.24 L513.55 412.04 L513.78 411.84 L514.01 411.64 L514.22 411.42 L514.44 411.21 L514.64 410.98 L514.84 410.75 L515.04 410.51 L515.22 410.27 L515.4 410.02 L515.57 409.77Z M501.29 412.94 L502.41 414.58 L503.27 415.9 L503.9 417.04 L504.35 418.11 L504.68 419.12 L504.91 420.11 L505.07 421.09 L505.18 422.06 L505.26 423.02 L505.3 423.99 L505.33 424.94 L505.33 425.9 L505.32 426.86 L505.29 427.81 L505.23 428.76 L505.15 429.71 L505.03 430.66 L504.87 431.61 L504.64 432.55 L504.32 433.48 L503.88 434.4 L503.28 435.29 L502.46 436.15 L501.32 436.95 L498.79 436.42 L496.3 435.71 L493.87 434.8 L491.52 433.7 L489.27 432.43 L487.12 430.98 L485.08 429.38 L483.18 427.62 L481.42 425.72 L479.82 423.68 L478.37 421.53 L477.1 419.28 L476 416.93 L475.09 414.5 L474.38 412.01 L473.85 409.48 L474.65 408.34 L475.51 407.52 L476.4 406.92 L477.32 406.48 L478.25 406.16 L479.19 405.93 L480.14 405.77 L481.09 405.65 L482.04 405.57 L482.99 405.51 L483.94 405.48 L484.9 405.47 L485.86 405.47 L486.81 405.5 L487.78 405.54 L488.74 405.62 L489.71 405.73 L490.69 405.89 L491.68 406.12 L492.69 406.45 L493.76 406.9 L494.9 407.53 L496.22 408.39 L497.86 409.51 L498.03 409.77 L498.2 410.02 L498.38 410.27 L498.56 410.51 L498.76 410.75 L498.96 410.98 L499.16 411.21 L499.38 411.42 L499.59 411.64 L499.82 411.84 L500.05 412.04 L500.29 412.24 L500.53 412.42 L500.78 412.6 L501.03 412.77Z M497.86 398.49 L496.22 399.61 L494.9 400.47 L493.76 401.1 L492.69 401.55 L491.68 401.88 L490.69 402.11 L489.71 402.27 L488.74 402.38 L487.78 402.46 L486.81 402.5 L485.86 402.53 L484.9 402.53 L483.94 402.52 L482.99 402.49 L482.04 402.43 L481.09 402.35 L480.14 402.23 L479.19 402.07 L478.25 401.84 L477.32 401.52 L476.4 401.08 L475.51 400.48 L474.65 399.66 L473.85 398.52 L474.38 395.99 L475.09 393.5 L476 391.07 L477.1 388.72 L478.37 386.47 L479.82 384.32 L481.42 382.28 L483.18 380.38 L485.08 378.62 L487.12 377.02 L489.27 375.57 L491.52 374.3 L493.87 373.2 L496.3 372.29 L498.79 371.58 L501.32 371.05 L502.46 371.85 L503.28 372.71 L503.88 373.6 L504.32 374.52 L504.64 375.45 L504.87 376.39 L505.03 377.34 L505.15 378.29 L505.23 379.24 L505.29 380.19 L505.32 381.14 L505.33 382.1 L505.33 383.06 L505.3 384.01 L505.26 384.98 L505.18 385.94 L505.07 386.91 L504.91 387.89 L504.68 388.88 L504.35 389.89 L503.9 390.96 L503.27 392.1 L502.41 393.42 L501.29 395.06 L501.03 395.23 L500.78 395.4 L500.53 395.58 L500.29 395.76 L500.05 395.96 L499.82 396.16 L499.59 396.36 L499.38 396.58 L499.16 396.79 L498.96 397.02 L498.76 397.25 L498.56 397.49 L498.38 397.73 L498.2 397.98 L498.03 398.23Z" transform="translate(-0.9,0.9)" fill="#5a6a88" fill-rule="evenodd"/>
<path d="M544.08 406.99 L544.03 407.61 L543.96 408.23 L549.46 410.82 L549.61 411.71 L549.16 412.49 L543.1 413 L542.78 414.2 L542.61 414.8 L542.42 415.4 L547.31 419.01 L547.28 419.91 L546.69 420.59 L540.65 419.91 L540.1 421.03 L539.81 421.58 L539.51 422.13 L543.6 426.63 L543.4 427.51 L542.68 428.05 L536.89 426.2 L536.14 427.2 L535.75 427.68 L535.35 428.16 L538.48 433.37 L538.11 434.2 L537.3 434.59 L531.98 431.65 L531.05 432.47 L530.57 432.88 L530.08 433.27 L532.14 438.99 L531.62 439.72 L530.75 439.95 L526.11 436.03 L525.03 436.66 L524.48 436.96 L523.93 437.25 L524.83 443.26 L524.17 443.88 L523.27 443.94 L519.49 439.18 L518.31 439.59 L517.71 439.77 L517.11 439.95 L516.82 446.02 L516.06 446.5 L515.17 446.38 L512.38 440.98 L511.14 441.15 L510.52 441.21 L509.9 441.27 L508.43 447.17 L507.59 447.49 L506.74 447.2 L505.06 441.36 L503.81 441.28 L503.19 441.23 L502.57 441.16 L499.98 446.66 L499.09 446.81 L498.31 446.36 L497.8 440.3 L496.6 439.98 L496 439.81 L495.4 439.62 L491.79 444.51 L490.89 444.48 L490.21 443.89 L490.89 437.85 L489.77 437.3 L489.22 437.01 L488.67 436.71 L484.17 440.8 L483.29 440.6 L482.75 439.88 L484.6 434.09 L483.6 433.34 L483.12 432.95 L482.64 432.55 L477.43 435.68 L476.6 435.31 L476.21 434.5 L479.15 429.18 L478.33 428.25 L477.92 427.77 L477.53 427.28 L471.81 429.34 L471.08 428.82 L470.85 427.95 L474.77 423.31 L474.14 422.23 L473.84 421.68 L473.55 421.13 L467.54 422.03 L466.92 421.37 L466.86 420.47 L471.62 416.69 L471.21 415.51 L471.03 414.91 L470.85 414.31 L464.78 414.02 L464.3 413.26 L464.42 412.37 L469.82 409.58 L469.65 408.34 L469.59 407.72 L469.53 407.1 L463.63 405.63 L463.31 404.79 L463.6 403.94 L469.44 402.26 L469.52 401.01 L469.57 400.39 L469.64 399.77 L464.14 397.18 L463.99 396.29 L464.44 395.51 L470.5 395 L470.82 393.8 L470.99 393.2 L471.18 392.6 L466.29 388.99 L466.32 388.09 L466.91 387.41 L472.95 388.09 L473.5 386.97 L473.79 386.42 L474.09 385.87 L470 381.37 L470.2 380.49 L470.92 379.95 L476.71 381.8 L477.46 380.8 L477.85 380.32 L478.25 379.84 L475.12 374.63 L475.49 373.8 L476.3 373.41 L481.62 376.35 L482.55 375.53 L483.03 375.12 L483.52 374.73 L481.46 369.01 L481.98 368.28 L482.85 368.05 L487.49 371.97 L488.57 371.34 L489.12 371.04 L489.67 370.75 L488.77 364.74 L489.43 364.12 L490.33 364.06 L494.11 368.82 L495.29 368.41 L495.89 368.23 L496.49 368.05 L496.78 361.98 L497.54 361.5 L498.43 361.62 L501.22 367.02 L502.46 366.85 L503.08 366.79 L503.7 366.73 L505.17 360.83 L506.01 360.51 L506.86 360.8 L508.54 366.64 L509.79 366.72 L510.41 366.77 L511.03 366.84 L513.62 361.34 L514.51 361.19 L515.29 361.64 L515.8 367.7 L517 368.02 L517.6 368.19 L518.2 368.38 L521.81 363.49 L522.71 363.52 L523.39 364.11 L522.71 370.15 L523.83 370.7 L524.38 370.99 L524.93 371.29 L529.43 367.2 L530.31 367.4 L530.85 368.12 L529 373.91 L530 374.66 L530.48 375.05 L530.96 375.45 L536.17 372.32 L537 372.69 L537.39 373.5 L534.45 378.82 L535.27 379.75 L535.68 380.23 L536.07 380.72 L541.79 378.66 L542.52 379.18 L542.75 380.05 L538.83 384.69 L539.46 385.77 L539.76 386.32 L540.05 386.87 L546.06 385.97 L546.68 386.63 L546.74 387.53 L541.98 391.31 L542.39 392.49 L542.57 393.09 L542.75 393.69 L548.82 393.98 L549.3 394.74 L549.18 395.63 L543.78 398.42 L543.95 399.66 L544.01 400.28 L544.07 400.9 L549.97 402.37 L550.29 403.21 L550 404.06 L544.16 405.74Z M512.31 395.06 L511.19 393.42 L510.33 392.1 L509.7 390.96 L509.25 389.89 L508.92 388.88 L508.69 387.89 L508.53 386.91 L508.42 385.94 L508.34 384.98 L508.3 384.01 L508.27 383.06 L508.27 382.1 L508.28 381.14 L508.31 380.19 L508.37 379.24 L508.45 378.29 L508.57 377.34 L508.73 376.39 L508.96 375.45 L509.28 374.52 L509.72 373.6 L510.32 372.71 L511.14 371.85 L512.28 371.05 L514.81 371.58 L517.3 372.29 L519.73 373.2 L522.08 374.3 L524.33 375.57 L526.48 377.02 L528.52 378.62 L530.42 380.38 L532.18 382.28 L533.78 384.32 L535.23 386.47 L536.5 388.72 L537.6 391.07 L538.51 393.5 L539.22 395.99 L539.75 398.52 L538.95 399.66 L538.09 400.48 L537.2 401.08 L536.28 401.52 L535.35 401.84 L534.41 402.07 L533.46 402.23 L532.51 402.35 L531.56 402.43 L530.61 402.49 L529.66 402.52 L528.7 402.53 L527.74 402.53 L526.79 402.5 L525.82 402.46 L524.86 402.38 L523.89 402.27 L522.91 402.11 L521.92 401.88 L520.91 401.55 L519.84 401.1 L518.7 400.47 L517.38 399.61 L515.74 398.49 L515.57 398.23 L515.4 397.98 L515.22 397.73 L515.04 397.49 L514.84 397.25 L514.64 397.02 L514.44 396.79 L514.22 396.58 L514.01 396.36 L513.78 396.16 L513.55 395.96 L513.31 395.76 L513.07 395.58 L512.82 395.4 L512.57 395.23Z M515.74 409.51 L517.38 408.39 L518.7 407.53 L519.84 406.9 L520.91 406.45 L521.92 406.12 L522.91 405.89 L523.89 405.73 L524.86 405.62 L525.82 405.54 L526.79 405.5 L527.74 405.47 L528.7 405.47 L529.66 405.48 L530.61 405.51 L531.56 405.57 L532.51 405.65 L533.46 405.77 L534.41 405.93 L535.35 406.16 L536.28 406.48 L537.2 406.92 L538.09 407.52 L538.95 408.34 L539.75 409.48 L539.22 412.01 L538.51 414.5 L537.6 416.93 L536.5 419.28 L535.23 421.53 L533.78 423.68 L532.18 425.72 L530.42 427.62 L528.52 429.38 L526.48 430.98 L524.33 432.43 L522.08 433.7 L519.73 434.8 L517.3 435.71 L514.81 436.42 L512.28 436.95 L511.14 436.15 L510.32 435.29 L509.72 434.4 L509.28 433.48 L508.96 432.55 L508.73 431.61 L508.57 430.66 L508.45 429.71 L508.37 428.76 L508.31 427.81 L508.28 426.86 L508.27 425.9 L508.27 424.94 L508.3 423.99 L508.34 423.02 L508.42 422.06 L508.53 421.09 L508.69 420.11 L508.92 419.12 L509.25 418.11 L509.7 417.04 L510.33 415.9 L511.19 414.58 L512.31 412.94 L512.57 412.77 L512.82 412.6 L513.07 412.42 L513.31 412.24 L513.55 412.04 L513.78 411.84 L514.01 411.64 L514.22 411.42 L514.44 411.21 L514.64 410.98 L514.84 410.75 L515.04 410.51 L515.22 410.27 L515.4 410.02 L515.57 409.77Z M501.29 412.94 L502.41 414.58 L503.27 415.9 L503.9 417.04 L504.35 418.11 L504.68 419.12 L504.91 420.11 L505.07 421.09 L505.18 422.06 L505.26 423.02 L505.3 423.99 L505.33 424.94 L505.33 425.9 L505.32 426.86 L505.29 427.81 L505.23 428.76 L505.15 429.71 L505.03 430.66 L504.87 431.61 L504.64 432.55 L504.32 433.48 L503.88 434.4 L503.28 435.29 L502.46 436.15 L501.32 436.95 L498.79 436.42 L496.3 435.71 L493.87 434.8 L491.52 433.7 L489.27 432.43 L487.12 430.98 L485.08 429.38 L483.18 427.62 L481.42 425.72 L479.82 423.68 L478.37 421.53 L477.1 419.28 L476 416.93 L475.09 414.5 L474.38 412.01 L473.85 409.48 L474.65 408.34 L475.51 407.52 L476.4 406.92 L477.32 406.48 L478.25 406.16 L479.19 405.93 L480.14 405.77 L481.09 405.65 L482.04 405.57 L482.99 405.51 L483.94 405.48 L484.9 405.47 L485.86 405.47 L486.81 405.5 L487.78 405.54 L488.74 405.62 L489.71 405.73 L490.69 405.89 L491.68 406.12 L492.69 406.45 L493.76 406.9 L494.9 407.53 L496.22 408.39 L497.86 409.51 L498.03 409.77 L498.2 410.02 L498.38 410.27 L498.56 410.51 L498.76 410.75 L498.96 410.98 L499.16 411.21 L499.38 411.42 L499.59 411.64 L499.82 411.84 L500.05 412.04 L500.29 412.24 L500.53 412.42 L500.78 412.6 L501.03 412.77Z M497.86 398.49 L496.22 399.61 L494.9 400.47 L493.76 401.1 L492.69 401.55 L491.68 401.88 L490.69 402.11 L489.71 402.27 L488.74 402.38 L487.78 402.46 L486.81 402.5 L485.86 402.53 L484.9 402.53 L483.94 402.52 L482.99 402.49 L482.04 402.43 L481.09 402.35 L480.14 402.23 L479.19 402.07 L478.25 401.84 L477.32 401.52 L476.4 401.08 L475.51 400.48 L474.65 399.66 L473.85 398.52 L474.38 395.99 L475.09 393.5 L476 391.07 L477.1 388.72 L478.37 386.47 L479.82 384.32 L481.42 382.28 L483.18 380.38 L485.08 378.62 L487.12 377.02 L489.27 375.57 L491.52 374.3 L493.87 373.2 L496.3 372.29 L498.79 371.58 L501.32 371.05 L502.46 371.85 L503.28 372.71 L503.88 373.6 L504.32 374.52 L504.64 375.45 L504.87 376.39 L505.03 377.34 L505.15 378.29 L505.23 379.24 L505.29 380.19 L505.32 381.14 L505.33 382.1 L505.33 383.06 L505.3 384.01 L505.26 384.98 L505.18 385.94 L505.07 386.91 L504.91 387.89 L504.68 388.88 L504.35 389.89 L503.9 390.96 L503.27 392.1 L502.41 393.42 L501.29 395.06 L501.03 395.23 L500.78 395.4 L500.53 395.58 L500.29 395.76 L500.05 395.96 L499.82 396.16 L499.59 396.36 L499.38 396.58 L499.16 396.79 L498.96 397.02 L498.76 397.25 L498.56 397.49 L498.38 397.73 L498.2 397.98 L498.03 398.23Z" fill="#c2dbf2" fill-rule="evenodd" stroke="#94b0d0" stroke-width="0.6" stroke-linejoin="round"/>
<path d="M512.31 395.06 L511.19 393.42 L510.33 392.1 L509.7 390.96 L509.25 389.89 L508.92 388.88 L508.69 387.89 L508.53 386.91 L508.42 385.94 L508.34 384.98 L508.3 384.01 L508.27 383.06 L508.27 382.1 L508.28 381.14 L508.31 380.19 L508.37 379.24 L508.45 378.29 L508.57 377.34 L508.73 376.39 L508.96 375.45 L509.28 374.52 L509.72 373.6 L510.32 372.71 L511.14 371.85 L512.28 371.05 L514.81 371.58 L517.3 372.29 L519.73 373.2 L522.08 374.3 L524.33 375.57 L526.48 377.02 L528.52 378.62 L530.42 380.38 L532.18 382.28 L533.78 384.32 L535.23 386.47 L536.5 388.72 L537.6 391.07 L538.51 393.5 L539.22 395.99 L539.75 398.52 L538.95 399.66 L538.09 400.48 L537.2 401.08 L536.28 401.52 L535.35 401.84 L534.41 402.07 L533.46 402.23 L532.51 402.35 L531.56 402.43 L530.61 402.49 L529.66 402.52 L528.7 402.53 L527.74 402.53 L526.79 402.5 L525.82 402.46 L524.86 402.38 L523.89 402.27 L522.91 402.11 L521.92 401.88 L520.91 401.55 L519.84 401.1 L518.7 400.47 L517.38 399.61 L515.74 398.49 L515.57 398.23 L515.4 397.98 L515.22 397.73 L515.04 397.49 L514.84 397.25 L514.64 397.02 L514.44 396.79 L514.22 396.58 L514.01 396.36 L513.78 396.16 L513.55 395.96 L513.31 395.76 L513.07 395.58 L512.82 395.4 L512.57 395.23Z M515.74 409.51 L517.38 408.39 L518.7 407.53 L519.84 406.9 L520.91 406.45 L521.92 406.12 L522.91 405.89 L523.89 405.73 L524.86 405.62 L525.82 405.54 L526.79 405.5 L527.74 405.47 L528.7 405.47 L529.66 405.48 L530.61 405.51 L531.56 405.57 L532.51 405.65 L533.46 405.77 L534.41 405.93 L535.35 406.16 L536.28 406.48 L537.2 406.92 L538.09 407.52 L538.95 408.34 L539.75 409.48 L539.22 412.01 L538.51 414.5 L537.6 416.93 L536.5 419.28 L535.23 421.53 L533.78 423.68 L532.18 425.72 L530.42 427.62 L528.52 429.38 L526.48 430.98 L524.33 432.43 L522.08 433.7 L519.73 434.8 L517.3 435.71 L514.81 436.42 L512.28 436.95 L511.14 436.15 L510.32 435.29 L509.72 434.4 L509.28 433.48 L508.96 432.55 L508.73 431.61 L508.57 430.66 L508.45 429.71 L508.37 428.76 L508.31 427.81 L508.28 426.86 L508.27 425.9 L508.27 424.94 L508.3 423.99 L508.34 423.02 L508.42 422.06 L508.53 421.09 L508.69 420.11 L508.92 419.12 L509.25 418.11 L509.7 417.04 L510.33 415.9 L511.19 414.58 L512.31 412.94 L512.57 412.77 L512.82 412.6 L513.07 412.42 L513.31 412.24 L513.55 412.04 L513.78 411.84 L514.01 411.64 L514.22 411.42 L514.44 411.21 L514.64 410.98 L514.84 410.75 L515.04 410.51 L515.22 410.27 L515.4 410.02 L515.57 409.77Z M501.29 412.94 L502.41 414.58 L503.27 415.9 L503.9 417.04 L504.35 418.11 L504.68 419.12 L504.91 420.11 L505.07 421.09 L505.18 422.06 L505.26 423.02 L505.3 423.99 L505.33 424.94 L505.33 425.9 L505.32 426.86 L505.29 427.81 L505.23 428.76 L505.15 429.71 L505.03 430.66 L504.87 431.61 L504.64 432.55 L504.32 433.48 L503.88 434.4 L503.28 435.29 L502.46 436.15 L501.32 436.95 L498.79 436.42 L496.3 435.71 L493.87 434.8 L491.52 433.7 L489.27 432.43 L487.12 430.98 L485.08 429.38 L483.18 427.62 L481.42 425.72 L479.82 423.68 L478.37 421.53 L477.1 419.28 L476 416.93 L475.09 414.5 L474.38 412.01 L473.85 409.48 L474.65 408.34 L475.51 407.52 L476.4 406.92 L477.32 406.48 L478.25 406.16 L479.19 405.93 L480.14 405.77 L481.09 405.65 L482.04 405.57 L482.99 405.51 L483.94 405.48 L484.9 405.47 L485.86 405.47 L486.81 405.5 L487.78 405.54 L488.74 405.62 L489.71 405.73 L490.69 405.89 L491.68 406.12 L492.69 406.45 L493.76 406.9 L494.9 407.53 L496.22 408.39 L497.86 409.51 L498.03 409.77 L498.2 410.02 L498.38 410.27 L498.56 410.51 L498.76 410.75 L498.96 410.98 L499.16 411.21 L499.38 411.42 L499.59 411.64 L499.82 411.84 L500.05 412.04 L500.29 412.24 L500.53 412.42 L500.78 412.6 L501.03 412.77Z M497.86 398.49 L496.22 399.61 L494.9 400.47 L493.76 401.1 L492.69 401.55 L491.68 401.88 L490.69 402.11 L489.71 402.27 L488.74 402.38 L487.78 402.46 L486.81 402.5 L485.86 402.53 L484.9 402.53 L483.94 402.52 L482.99 402.49 L482.04 402.43 L481.09 402.35 L480.14 402.23 L479.19 402.07 L478.25 401.84 L477.32 401.52 L476.4 401.08 L475.51 400.48 L474.65 399.66 L473.85 398.52 L474.38 395.99 L475.09 393.5 L476 391.07 L477.1 388.72 L478.37 386.47 L479.82 384.32 L481.42 382.28 L483.18 380.38 L485.08 378.62 L487.12 377.02 L489.27 375.57 L491.52 374.3 L493.87 373.2 L496.3 372.29 L498.79 371.58 L501.32 371.05 L502.46 371.85 L503.28 372.71 L503.88 373.6 L504.32 374.52 L504.64 375.45 L504.87 376.39 L505.03 377.34 L505.15 378.29 L505.23 379.24 L505.29 380.19 L505.32 381.14 L505.33 382.1 L505.33 383.06 L505.3 384.01 L505.26 384.98 L505.18 385.94 L505.07 386.91 L504.91 387.89 L504.68 388.88 L504.35 389.89 L503.9 390.96 L503.27 392.1 L502.41 393.42 L501.29 395.06 L501.03 395.23 L500.78 395.4 L500.53 395.58 L500.29 395.76 L500.05 395.96 L499.82 396.16 L499.59 396.36 L499.38 396.58 L499.16 396.79 L498.96 397.02 L498.76 397.25 L498.56 397.49 L498.38 397.73 L498.2 397.98 L498.03 398.23Z" fill="none" stroke="#2a3048" stroke-width="0.7" opacity="0.55"/>
<circle cx="506.8" cy="404" r="10.5" fill="#c2dbf2"/>
<circle cx="507.7" cy="405" r="6.8" fill="#101018"/>
<circle cx="506.8" cy="404" r="6.5" fill="#f49cf8"/>
<path d="M394 383.2 Q402 379 413 378.8 Q424 379.5 429 385.7 Q433 389 434.6 393.1 Q438 398.5 448 398.7 L460 399.5 L499.4 399.8 L499.8 411.6 L470 415.5 Q452 418 448 418.6 Q439 421 437.8 424.2 Q435.5 428 435.3 431.7 Q432 439 425.3 441.7 Q418 445.5 410 445.4 L394 442.9Z" fill="#101010" transform="translate(0.6,1.2)"/>
<path d="M394 383.2 Q402 379 413 378.8 Q424 379.5 429 385.7 Q433 389 434.6 393.1 Q438 398.5 448 398.7 L460 399.5 L499.4 399.8 L499.8 411.6 L470 415.5 Q452 418 448 418.6 Q439 421 437.8 424.2 Q435.5 428 435.3 431.7 Q432 439 425.3 441.7 Q418 445.5 410 445.4 L394 442.9Z" fill="url(#wrg)"/>
<path d="M398 396.3 L421.6 393.1 L424 428.6 L399.8 428.6Z" fill="#101010"/>
<path d="M400.6 397 L403 396.6 L403.6 427.6 L401.4 427.6Z" fill="#f294f6"/>
<path d="M403.5 396.5 L421.6 394.2 L424 428.6 L404 428.6Z" fill="#80ffff"/>
<path d="M641.16 401.96 L641.11 402.75 L641.04 403.54 L646.21 405.67 L646.25 407.19 L645.64 408.58 L640.05 408.61 L639.57 410.12 L639.3 410.86 L639.01 411.6 L643.37 415.1 L642.98 416.57 L642.01 417.73 L636.63 416.18 L635.74 417.49 L635.28 418.13 L634.79 418.76 L637.99 423.34 L637.2 424.64 L635.94 425.48 L631.22 422.49 L630 423.5 L629.36 423.98 L628.72 424.44 L630.5 429.74 L629.38 430.77 L627.93 431.22 L624.24 427.01 L622.79 427.63 L622.05 427.92 L621.3 428.18 L621.51 433.77 L620.15 434.44 L618.63 434.46 L616.28 429.38 L614.71 429.57 L613.92 429.64 L613.12 429.68 L611.75 435.1 L610.26 435.36 L608.79 434.95 L607.97 429.42 L606.41 429.16 L605.63 429 L604.86 428.81 L602.01 433.63 L600.51 433.45 L599.22 432.65 L599.98 427.11 L598.56 426.42 L597.86 426.05 L597.17 425.65 L593.09 429.47 L591.69 428.88 L590.68 427.75 L592.97 422.65 L591.8 421.58 L591.23 421.03 L590.69 420.46 L585.69 422.97 L584.52 422.01 L583.86 420.64 L587.5 416.39 L586.68 415.04 L586.29 414.35 L585.93 413.64 L580.42 414.65 L579.57 413.39 L579.33 411.89 L584.02 408.85 L583.61 407.32 L583.43 406.54 L583.28 405.77 L577.72 405.18 L577.25 403.73 L577.44 402.23 L582.8 400.62 L582.84 399.04 L582.89 398.25 L582.96 397.46 L577.79 395.33 L577.75 393.81 L578.36 392.42 L583.95 392.39 L584.43 390.88 L584.7 390.14 L584.99 389.4 L580.63 385.9 L581.02 384.43 L581.99 383.27 L587.37 384.82 L588.26 383.51 L588.72 382.87 L589.21 382.24 L586.01 377.66 L586.8 376.36 L588.06 375.52 L592.78 378.51 L594 377.5 L594.64 377.02 L595.28 376.56 L593.5 371.26 L594.62 370.23 L596.07 369.78 L599.76 373.99 L601.21 373.37 L601.95 373.08 L602.7 372.82 L602.49 367.23 L603.85 366.56 L605.37 366.54 L607.72 371.62 L609.29 371.43 L610.08 371.36 L610.88 371.32 L612.25 365.9 L613.74 365.64 L615.21 366.05 L616.03 371.58 L617.59 371.84 L618.37 372 L619.14 372.19 L621.99 367.37 L623.49 367.55 L624.78 368.35 L624.02 373.89 L625.44 374.58 L626.14 374.95 L626.83 375.35 L630.91 371.53 L632.31 372.12 L633.32 373.25 L631.03 378.35 L632.2 379.42 L632.77 379.97 L633.31 380.54 L638.31 378.03 L639.48 378.99 L640.14 380.36 L636.5 384.61 L637.32 385.96 L637.71 386.65 L638.07 387.36 L643.58 386.35 L644.43 387.61 L644.67 389.11 L639.98 392.15 L640.39 393.68 L640.57 394.46 L640.72 395.23 L646.28 395.82 L646.75 397.27 L646.56 398.77 L641.2 400.38Z M608.28 413.83 L608.49 414.25 L608.66 414.65 L608.79 415.03 L608.89 415.4 L608.96 415.75 L609.01 416.1 L609.05 416.44 L609.07 416.77 L609.07 417.1 L609.07 417.42 L609.05 417.74 L609.02 418.06 L608.99 418.37 L608.94 418.68 L608.88 418.99 L608.81 419.3 L608.72 419.6 L608.62 419.89 L608.49 420.18 L608.34 420.46 L608.17 420.74 L607.95 421 L607.69 421.25 L607.38 421.48 L605.24 420.68 L603.2 419.67 L601.28 418.45 L599.49 417.04 L597.86 415.45 L596.4 413.7 L595.13 411.81 L594.06 409.8 L593.21 407.69 L592.58 405.5 L592.17 403.26 L592.01 400.98 L592.07 398.71 L592.38 396.45 L592.91 394.24 L593.67 392.09 L594.05 392 L594.41 391.96 L594.75 391.96 L595.07 392 L595.38 392.07 L595.69 392.16 L595.98 392.27 L596.26 392.39 L596.54 392.53 L596.82 392.69 L597.09 392.85 L597.35 393.02 L597.61 393.21 L597.87 393.4 L598.12 393.61 L598.37 393.82 L598.61 394.05 L598.85 394.29 L599.08 394.56 L599.3 394.84 L599.52 395.15 L599.73 395.5 L599.93 395.88 L600.12 396.31 L599.79 397.59 L599.59 398.9 L599.5 400.22 L599.54 401.54 L599.69 402.85 L599.97 404.14 L600.36 405.41 L600.86 406.63 L601.47 407.8 L602.19 408.91 L603 409.95 L603.91 410.91 L604.9 411.79 L605.96 412.57 L607.09 413.25Z M605.32 388.89 L604.85 388.86 L604.42 388.8 L604.02 388.72 L603.66 388.62 L603.31 388.51 L602.99 388.38 L602.68 388.24 L602.38 388.09 L602.09 387.93 L601.81 387.77 L601.54 387.59 L601.28 387.41 L601.03 387.22 L600.78 387.03 L600.54 386.82 L600.32 386.61 L600.1 386.38 L599.9 386.14 L599.71 385.89 L599.54 385.62 L599.39 385.33 L599.27 385.01 L599.19 384.66 L599.14 384.27 L600.9 382.82 L602.8 381.56 L604.82 380.51 L606.93 379.67 L609.12 379.05 L611.37 378.66 L613.64 378.5 L615.92 378.58 L618.17 378.9 L620.38 379.45 L622.53 380.22 L624.58 381.21 L626.52 382.41 L628.32 383.8 L629.97 385.37 L631.45 387.1 L631.34 387.47 L631.2 387.8 L631.02 388.1 L630.83 388.36 L630.61 388.59 L630.38 388.81 L630.14 389.01 L629.89 389.19 L629.63 389.37 L629.36 389.53 L629.08 389.68 L628.8 389.82 L628.51 389.95 L628.21 390.08 L627.91 390.19 L627.6 390.3 L627.28 390.4 L626.95 390.48 L626.61 390.55 L626.25 390.6 L625.87 390.63 L625.47 390.64 L625.04 390.62 L624.57 390.57 L623.62 389.65 L622.59 388.82 L621.49 388.09 L620.33 387.46 L619.12 386.93 L617.86 386.52 L616.57 386.23 L615.26 386.06 L613.94 386 L612.62 386.07 L611.32 386.25 L610.03 386.55 L608.78 386.97 L607.57 387.5 L606.41 388.14Z M628.4 398.79 L628.66 398.39 L628.93 398.05 L629.19 397.75 L629.46 397.48 L629.73 397.24 L630 397.02 L630.28 396.82 L630.56 396.64 L630.84 396.47 L631.12 396.31 L631.41 396.16 L631.69 396.03 L631.98 395.9 L632.28 395.79 L632.57 395.69 L632.87 395.6 L633.18 395.52 L633.48 395.46 L633.8 395.43 L634.12 395.42 L634.44 395.43 L634.78 395.49 L635.12 395.59 L635.48 395.75 L635.86 397.99 L636 400.27 L635.9 402.54 L635.58 404.8 L635.02 407 L634.23 409.14 L633.23 411.19 L632.02 413.12 L630.62 414.91 L629.04 416.56 L627.3 418.02 L625.42 419.31 L623.41 420.39 L621.31 421.25 L619.12 421.9 L616.88 422.31 L616.61 422.03 L616.4 421.74 L616.23 421.44 L616.1 421.14 L616 420.84 L615.93 420.53 L615.88 420.22 L615.85 419.91 L615.83 419.6 L615.82 419.29 L615.83 418.97 L615.85 418.66 L615.88 418.34 L615.92 418.02 L615.97 417.7 L616.03 417.38 L616.11 417.05 L616.2 416.73 L616.31 416.39 L616.45 416.06 L616.61 415.72 L616.8 415.36 L617.04 415 L617.32 414.62 L618.59 414.26 L619.82 413.78 L621 413.2 L622.13 412.51 L623.19 411.72 L624.17 410.83 L625.07 409.86 L625.88 408.82 L626.59 407.7 L627.19 406.53 L627.68 405.3 L628.06 404.03 L628.33 402.74 L628.47 401.43 L628.49 400.11Z" transform="translate(-1.8,1.3)" fill="#0a0a0a" fill-rule="evenodd" stroke="#0a0a0a" stroke-width="1" stroke-linejoin="round"/>
<path d="M641.16 401.96 L641.11 402.75 L641.04 403.54 L646.21 405.67 L646.25 407.19 L645.64 408.58 L640.05 408.61 L639.57 410.12 L639.3 410.86 L639.01 411.6 L643.37 415.1 L642.98 416.57 L642.01 417.73 L636.63 416.18 L635.74 417.49 L635.28 418.13 L634.79 418.76 L637.99 423.34 L637.2 424.64 L635.94 425.48 L631.22 422.49 L630 423.5 L629.36 423.98 L628.72 424.44 L630.5 429.74 L629.38 430.77 L627.93 431.22 L624.24 427.01 L622.79 427.63 L622.05 427.92 L621.3 428.18 L621.51 433.77 L620.15 434.44 L618.63 434.46 L616.28 429.38 L614.71 429.57 L613.92 429.64 L613.12 429.68 L611.75 435.1 L610.26 435.36 L608.79 434.95 L607.97 429.42 L606.41 429.16 L605.63 429 L604.86 428.81 L602.01 433.63 L600.51 433.45 L599.22 432.65 L599.98 427.11 L598.56 426.42 L597.86 426.05 L597.17 425.65 L593.09 429.47 L591.69 428.88 L590.68 427.75 L592.97 422.65 L591.8 421.58 L591.23 421.03 L590.69 420.46 L585.69 422.97 L584.52 422.01 L583.86 420.64 L587.5 416.39 L586.68 415.04 L586.29 414.35 L585.93 413.64 L580.42 414.65 L579.57 413.39 L579.33 411.89 L584.02 408.85 L583.61 407.32 L583.43 406.54 L583.28 405.77 L577.72 405.18 L577.25 403.73 L577.44 402.23 L582.8 400.62 L582.84 399.04 L582.89 398.25 L582.96 397.46 L577.79 395.33 L577.75 393.81 L578.36 392.42 L583.95 392.39 L584.43 390.88 L584.7 390.14 L584.99 389.4 L580.63 385.9 L581.02 384.43 L581.99 383.27 L587.37 384.82 L588.26 383.51 L588.72 382.87 L589.21 382.24 L586.01 377.66 L586.8 376.36 L588.06 375.52 L592.78 378.51 L594 377.5 L594.64 377.02 L595.28 376.56 L593.5 371.26 L594.62 370.23 L596.07 369.78 L599.76 373.99 L601.21 373.37 L601.95 373.08 L602.7 372.82 L602.49 367.23 L603.85 366.56 L605.37 366.54 L607.72 371.62 L609.29 371.43 L610.08 371.36 L610.88 371.32 L612.25 365.9 L613.74 365.64 L615.21 366.05 L616.03 371.58 L617.59 371.84 L618.37 372 L619.14 372.19 L621.99 367.37 L623.49 367.55 L624.78 368.35 L624.02 373.89 L625.44 374.58 L626.14 374.95 L626.83 375.35 L630.91 371.53 L632.31 372.12 L633.32 373.25 L631.03 378.35 L632.2 379.42 L632.77 379.97 L633.31 380.54 L638.31 378.03 L639.48 378.99 L640.14 380.36 L636.5 384.61 L637.32 385.96 L637.71 386.65 L638.07 387.36 L643.58 386.35 L644.43 387.61 L644.67 389.11 L639.98 392.15 L640.39 393.68 L640.57 394.46 L640.72 395.23 L646.28 395.82 L646.75 397.27 L646.56 398.77 L641.2 400.38Z M608.28 413.83 L608.49 414.25 L608.66 414.65 L608.79 415.03 L608.89 415.4 L608.96 415.75 L609.01 416.1 L609.05 416.44 L609.07 416.77 L609.07 417.1 L609.07 417.42 L609.05 417.74 L609.02 418.06 L608.99 418.37 L608.94 418.68 L608.88 418.99 L608.81 419.3 L608.72 419.6 L608.62 419.89 L608.49 420.18 L608.34 420.46 L608.17 420.74 L607.95 421 L607.69 421.25 L607.38 421.48 L605.24 420.68 L603.2 419.67 L601.28 418.45 L599.49 417.04 L597.86 415.45 L596.4 413.7 L595.13 411.81 L594.06 409.8 L593.21 407.69 L592.58 405.5 L592.17 403.26 L592.01 400.98 L592.07 398.71 L592.38 396.45 L592.91 394.24 L593.67 392.09 L594.05 392 L594.41 391.96 L594.75 391.96 L595.07 392 L595.38 392.07 L595.69 392.16 L595.98 392.27 L596.26 392.39 L596.54 392.53 L596.82 392.69 L597.09 392.85 L597.35 393.02 L597.61 393.21 L597.87 393.4 L598.12 393.61 L598.37 393.82 L598.61 394.05 L598.85 394.29 L599.08 394.56 L599.3 394.84 L599.52 395.15 L599.73 395.5 L599.93 395.88 L600.12 396.31 L599.79 397.59 L599.59 398.9 L599.5 400.22 L599.54 401.54 L599.69 402.85 L599.97 404.14 L600.36 405.41 L600.86 406.63 L601.47 407.8 L602.19 408.91 L603 409.95 L603.91 410.91 L604.9 411.79 L605.96 412.57 L607.09 413.25Z M605.32 388.89 L604.85 388.86 L604.42 388.8 L604.02 388.72 L603.66 388.62 L603.31 388.51 L602.99 388.38 L602.68 388.24 L602.38 388.09 L602.09 387.93 L601.81 387.77 L601.54 387.59 L601.28 387.41 L601.03 387.22 L600.78 387.03 L600.54 386.82 L600.32 386.61 L600.1 386.38 L599.9 386.14 L599.71 385.89 L599.54 385.62 L599.39 385.33 L599.27 385.01 L599.19 384.66 L599.14 384.27 L600.9 382.82 L602.8 381.56 L604.82 380.51 L606.93 379.67 L609.12 379.05 L611.37 378.66 L613.64 378.5 L615.92 378.58 L618.17 378.9 L620.38 379.45 L622.53 380.22 L624.58 381.21 L626.52 382.41 L628.32 383.8 L629.97 385.37 L631.45 387.1 L631.34 387.47 L631.2 387.8 L631.02 388.1 L630.83 388.36 L630.61 388.59 L630.38 388.81 L630.14 389.01 L629.89 389.19 L629.63 389.37 L629.36 389.53 L629.08 389.68 L628.8 389.82 L628.51 389.95 L628.21 390.08 L627.91 390.19 L627.6 390.3 L627.28 390.4 L626.95 390.48 L626.61 390.55 L626.25 390.6 L625.87 390.63 L625.47 390.64 L625.04 390.62 L624.57 390.57 L623.62 389.65 L622.59 388.82 L621.49 388.09 L620.33 387.46 L619.12 386.93 L617.86 386.52 L616.57 386.23 L615.26 386.06 L613.94 386 L612.62 386.07 L611.32 386.25 L610.03 386.55 L608.78 386.97 L607.57 387.5 L606.41 388.14Z M628.4 398.79 L628.66 398.39 L628.93 398.05 L629.19 397.75 L629.46 397.48 L629.73 397.24 L630 397.02 L630.28 396.82 L630.56 396.64 L630.84 396.47 L631.12 396.31 L631.41 396.16 L631.69 396.03 L631.98 395.9 L632.28 395.79 L632.57 395.69 L632.87 395.6 L633.18 395.52 L633.48 395.46 L633.8 395.43 L634.12 395.42 L634.44 395.43 L634.78 395.49 L635.12 395.59 L635.48 395.75 L635.86 397.99 L636 400.27 L635.9 402.54 L635.58 404.8 L635.02 407 L634.23 409.14 L633.23 411.19 L632.02 413.12 L630.62 414.91 L629.04 416.56 L627.3 418.02 L625.42 419.31 L623.41 420.39 L621.31 421.25 L619.12 421.9 L616.88 422.31 L616.61 422.03 L616.4 421.74 L616.23 421.44 L616.1 421.14 L616 420.84 L615.93 420.53 L615.88 420.22 L615.85 419.91 L615.83 419.6 L615.82 419.29 L615.83 418.97 L615.85 418.66 L615.88 418.34 L615.92 418.02 L615.97 417.7 L616.03 417.38 L616.11 417.05 L616.2 416.73 L616.31 416.39 L616.45 416.06 L616.61 415.72 L616.8 415.36 L617.04 415 L617.32 414.62 L618.59 414.26 L619.82 413.78 L621 413.2 L622.13 412.51 L623.19 411.72 L624.17 410.83 L625.07 409.86 L625.88 408.82 L626.59 407.7 L627.19 406.53 L627.68 405.3 L628.06 404.03 L628.33 402.74 L628.47 401.43 L628.49 400.11Z" fill="#ff2020" fill-rule="evenodd" stroke="#ff2020" stroke-width="0.9" stroke-linejoin="round"/>
<path d="M597 390 A21.5 21.5 0 0 1 628 383" fill="none" stroke="#0a0a0a" stroke-width="2"/>
<path d="M626.95 399.6 L626.88 400.14 L626.78 400.68 L631.31 403.13 L631.24 404.27 L630.54 405.17 L625.52 404 L624.93 404.92 L624.6 405.36 L624.25 405.78 L626.95 410.17 L626.32 411.12 L625.26 411.55 L621.5 408.03 L620.52 408.53 L620.02 408.74 L619.5 408.93 L619.65 414.08 L618.63 414.59 L617.5 414.43 L615.99 409.5 L614.9 409.45 L614.36 409.38 L613.82 409.28 L611.37 413.81 L610.23 413.74 L609.33 413.04 L610.5 408.02 L609.58 407.43 L609.14 407.1 L608.72 406.75 L604.33 409.45 L603.38 408.82 L602.95 407.76 L606.47 404 L605.97 403.02 L605.76 402.52 L605.57 402 L600.42 402.15 L599.91 401.13 L600.07 400 L605 398.49 L605.05 397.4 L605.12 396.86 L605.22 396.32 L600.69 393.87 L600.76 392.73 L601.46 391.83 L606.48 393 L607.07 392.08 L607.4 391.64 L607.75 391.22 L605.05 386.83 L605.68 385.88 L606.74 385.45 L610.5 388.97 L611.48 388.47 L611.98 388.26 L612.5 388.07 L612.35 382.92 L613.37 382.41 L614.5 382.57 L616.01 387.5 L617.1 387.55 L617.64 387.62 L618.18 387.72 L620.63 383.19 L621.77 383.26 L622.67 383.96 L621.5 388.98 L622.42 389.57 L622.86 389.9 L623.28 390.25 L627.67 387.55 L628.62 388.18 L629.05 389.24 L625.53 393 L626.03 393.98 L626.24 394.48 L626.43 395 L631.58 394.85 L632.09 395.87 L631.93 397 L627 398.51Z" transform="translate(-1.1,1.3)" fill="#0a0a0a" stroke="#0a0a0a" stroke-width="1.4" stroke-linejoin="round"/>
<path d="M626.95 399.6 L626.88 400.14 L626.78 400.68 L631.31 403.13 L631.24 404.27 L630.54 405.17 L625.52 404 L624.93 404.92 L624.6 405.36 L624.25 405.78 L626.95 410.17 L626.32 411.12 L625.26 411.55 L621.5 408.03 L620.52 408.53 L620.02 408.74 L619.5 408.93 L619.65 414.08 L618.63 414.59 L617.5 414.43 L615.99 409.5 L614.9 409.45 L614.36 409.38 L613.82 409.28 L611.37 413.81 L610.23 413.74 L609.33 413.04 L610.5 408.02 L609.58 407.43 L609.14 407.1 L608.72 406.75 L604.33 409.45 L603.38 408.82 L602.95 407.76 L606.47 404 L605.97 403.02 L605.76 402.52 L605.57 402 L600.42 402.15 L599.91 401.13 L600.07 400 L605 398.49 L605.05 397.4 L605.12 396.86 L605.22 396.32 L600.69 393.87 L600.76 392.73 L601.46 391.83 L606.48 393 L607.07 392.08 L607.4 391.64 L607.75 391.22 L605.05 386.83 L605.68 385.88 L606.74 385.45 L610.5 388.97 L611.48 388.47 L611.98 388.26 L612.5 388.07 L612.35 382.92 L613.37 382.41 L614.5 382.57 L616.01 387.5 L617.1 387.55 L617.64 387.62 L618.18 387.72 L620.63 383.19 L621.77 383.26 L622.67 383.96 L621.5 388.98 L622.42 389.57 L622.86 389.9 L623.28 390.25 L627.67 387.55 L628.62 388.18 L629.05 389.24 L625.53 393 L626.03 393.98 L626.24 394.48 L626.43 395 L631.58 394.85 L632.09 395.87 L631.93 397 L627 398.51Z M609.4 398.5 A6.6 6.6 0 1 1 622.6 398.5 A6.6 6.6 0 1 1 609.4 398.5Z" fill="#2aec2a" fill-rule="evenodd" stroke="#2aec2a" stroke-width="1.2" stroke-linejoin="round"/>
<circle cx="615.8" cy="399.1" r="6.1" fill="#0a0a0a"/>
<circle cx="616.2" cy="397.9" r="5.9" fill="#f49cf8"/>
<path d="M596.36 393.98 L596.31 394.84 L596.23 395.69 L600.41 397.66 L600.57 398.57 L600.12 399.38 L595.51 399.83 L595.07 401.49 L594.81 402.31 L594.53 403.12 L598.12 406.03 L598.06 406.95 L597.42 407.62 L592.84 406.96 L592.01 408.47 L591.56 409.2 L591.1 409.92 L593.89 413.61 L593.61 414.49 L592.83 414.99 L588.54 413.25 L587.38 414.51 L586.77 415.12 L586.14 415.7 L587.97 419.95 L587.48 420.74 L586.61 421.04 L582.86 418.33 L581.43 419.27 L580.69 419.71 L579.94 420.13 L580.7 424.7 L580.04 425.35 L579.12 425.43 L576.13 421.9 L574.51 422.47 L573.69 422.72 L572.87 422.95 L572.51 427.56 L571.71 428.04 L570.8 427.9 L568.75 423.75 L567.04 423.92 L566.18 423.97 L565.32 424 L563.87 428.39 L562.99 428.65 L562.13 428.3 L561.13 423.79 L559.43 423.54 L558.58 423.38 L557.74 423.2 L555.28 427.12 L554.36 427.17 L553.62 426.62 L553.72 422 L552.13 421.35 L551.35 420.99 L550.58 420.62 L547.25 423.83 L546.35 423.66 L545.75 422.95 L546.96 418.48 L545.57 417.48 L544.9 416.94 L544.24 416.39 L540.24 418.72 L539.4 418.33 L539 417.5 L541.24 413.46 L540.13 412.15 L539.6 411.47 L539.09 410.78 L534.65 412.08 L533.93 411.5 L533.74 410.6 L536.88 407.21 L536.12 405.67 L535.77 404.88 L535.44 404.09 L530.82 404.29 L530.26 403.56 L530.29 402.64 L534.15 400.1 L533.78 398.42 L533.63 397.57 L533.5 396.72 L528.96 395.81 L528.59 394.97 L528.84 394.08 L533.2 392.54 L533.24 390.82 L533.29 389.96 L533.37 389.11 L529.19 387.14 L529.03 386.23 L529.48 385.42 L534.09 384.97 L534.53 383.31 L534.79 382.49 L535.07 381.68 L531.48 378.77 L531.54 377.85 L532.18 377.18 L536.76 377.84 L537.59 376.33 L538.04 375.6 L538.5 374.88 L535.71 371.19 L535.99 370.31 L536.77 369.81 L541.06 371.55 L542.22 370.29 L542.83 369.68 L543.46 369.1 L541.63 364.85 L542.12 364.06 L542.99 363.76 L546.74 366.47 L548.17 365.53 L548.91 365.09 L549.66 364.67 L548.9 360.1 L549.56 359.45 L550.48 359.37 L553.47 362.9 L555.09 362.33 L555.91 362.08 L556.73 361.85 L557.09 357.24 L557.89 356.76 L558.8 356.9 L560.85 361.05 L562.56 360.88 L563.42 360.83 L564.28 360.8 L565.73 356.41 L566.61 356.15 L567.47 356.5 L568.47 361.01 L570.17 361.26 L571.02 361.42 L571.86 361.6 L574.32 357.68 L575.24 357.63 L575.98 358.18 L575.88 362.8 L577.47 363.45 L578.25 363.81 L579.02 364.18 L582.35 360.97 L583.25 361.14 L583.85 361.85 L582.64 366.32 L584.03 367.32 L584.7 367.86 L585.36 368.41 L589.36 366.08 L590.2 366.47 L590.6 367.3 L588.36 371.34 L589.47 372.65 L590 373.33 L590.51 374.02 L594.95 372.72 L595.67 373.3 L595.86 374.2 L592.72 377.59 L593.48 379.13 L593.83 379.92 L594.16 380.71 L598.78 380.51 L599.34 381.24 L599.31 382.16 L595.45 384.7 L595.82 386.38 L595.97 387.23 L596.1 388.08 L600.64 388.99 L601.01 389.83 L600.76 390.72 L596.4 392.26Z M557.4 392.4 A7.4 7.4 0 1 1 572.2 392.4 A7.4 7.4 0 1 1 557.4 392.4Z M569.45 375.22 L568.89 374.62 L568.46 374.08 L568.14 373.57 L567.89 373.08 L567.7 372.6 L567.56 372.14 L567.46 371.68 L567.38 371.22 L567.32 370.77 L567.29 370.32 L567.26 369.88 L567.25 369.43 L567.26 368.99 L567.27 368.54 L567.3 368.1 L567.35 367.66 L567.42 367.23 L567.52 366.79 L567.66 366.36 L567.84 365.94 L568.09 365.53 L568.43 365.12 L568.88 364.74 L569.48 364.39 L572.53 365.07 L575.49 366.09 L578.32 367.43 L580.99 369.06 L583.45 370.99 L585.7 373.17 L587.68 375.58 L589.4 378.2 L590.81 380.99 L591.9 383.92 L592.67 386.95 L593.1 390.05 L593.19 393.18 L592.93 396.3 L592.33 399.37 L591.4 402.35 L590.79 402.7 L590.24 402.9 L589.72 402.99 L589.24 403 L588.78 402.94 L588.34 402.85 L587.91 402.71 L587.5 402.56 L587.09 402.38 L586.7 402.19 L586.3 401.98 L585.92 401.76 L585.54 401.53 L585.16 401.29 L584.79 401.03 L584.43 400.75 L584.07 400.46 L583.73 400.14 L583.4 399.78 L583.08 399.39 L582.78 398.93 L582.5 398.39 L582.24 397.75 L582 396.97 L582.37 395.26 L582.56 393.53 L582.59 391.79 L582.44 390.06 L582.13 388.34 L581.65 386.67 L581.01 385.05 L580.22 383.5 L579.27 382.04 L578.19 380.67 L576.98 379.42 L575.65 378.29 L574.22 377.3 L572.7 376.45 L571.1 375.75Z M577.36 405.02 L578.15 404.83 L578.84 404.73 L579.44 404.71 L579.99 404.74 L580.49 404.81 L580.97 404.92 L581.42 405.06 L581.85 405.22 L582.27 405.4 L582.68 405.59 L583.08 405.79 L583.47 406.01 L583.85 406.23 L584.22 406.47 L584.59 406.72 L584.95 406.98 L585.29 407.26 L585.61 407.56 L585.92 407.89 L586.19 408.26 L586.43 408.69 L586.61 409.18 L586.72 409.76 L586.72 410.46 L584.6 412.76 L582.24 414.81 L579.67 416.6 L576.92 418.09 L574.02 419.26 L571.01 420.11 L567.92 420.63 L564.8 420.8 L561.68 420.63 L558.59 420.11 L555.58 419.26 L552.68 418.09 L549.93 416.6 L547.36 414.81 L545 412.76 L542.88 410.46 L542.88 409.76 L542.99 409.18 L543.17 408.69 L543.41 408.26 L543.68 407.89 L543.99 407.56 L544.31 407.26 L544.65 406.98 L545.01 406.72 L545.38 406.47 L545.75 406.23 L546.13 406.01 L546.52 405.79 L546.92 405.59 L547.33 405.4 L547.75 405.22 L548.18 405.06 L548.63 404.92 L549.11 404.81 L549.61 404.74 L550.16 404.71 L550.76 404.73 L551.45 404.83 L552.24 405.02 L553.54 406.18 L554.94 407.22 L556.43 408.11 L558.01 408.85 L559.65 409.44 L561.34 409.86 L563.06 410.11 L564.8 410.2 L566.54 410.11 L568.26 409.86 L569.95 409.44 L571.59 408.85 L573.17 408.11 L574.66 407.22 L576.06 406.18Z M547.6 396.97 L547.36 397.75 L547.1 398.39 L546.82 398.93 L546.52 399.39 L546.2 399.78 L545.87 400.14 L545.53 400.46 L545.17 400.75 L544.81 401.03 L544.44 401.29 L544.06 401.53 L543.68 401.76 L543.3 401.98 L542.9 402.19 L542.51 402.38 L542.1 402.56 L541.69 402.71 L541.26 402.85 L540.82 402.94 L540.36 403 L539.88 402.99 L539.36 402.9 L538.81 402.7 L538.2 402.35 L537.27 399.37 L536.67 396.3 L536.41 393.18 L536.5 390.05 L536.93 386.95 L537.7 383.92 L538.79 380.99 L540.2 378.2 L541.92 375.58 L543.9 373.17 L546.15 370.99 L548.61 369.06 L551.28 367.43 L554.11 366.09 L557.07 365.07 L560.12 364.39 L560.72 364.74 L561.17 365.12 L561.51 365.53 L561.76 365.94 L561.94 366.36 L562.08 366.79 L562.18 367.23 L562.25 367.66 L562.3 368.1 L562.33 368.54 L562.34 368.99 L562.35 369.43 L562.34 369.88 L562.31 370.32 L562.28 370.77 L562.22 371.22 L562.14 371.68 L562.04 372.14 L561.9 372.6 L561.71 373.08 L561.46 373.57 L561.14 374.08 L560.71 374.62 L560.15 375.22 L558.5 375.75 L556.9 376.45 L555.38 377.3 L553.95 378.29 L552.62 379.42 L551.41 380.67 L550.33 382.04 L549.38 383.5 L548.59 385.05 L547.95 386.67 L547.47 388.34 L547.16 390.06 L547.01 391.79 L547.04 393.53 L547.23 395.26Z" transform="translate(-1.1,1.1)" fill="#14201c" fill-rule="evenodd" stroke="#14201c" stroke-width="0.8" stroke-linejoin="round"/>
<path d="M596.36 393.98 L596.31 394.84 L596.23 395.69 L600.41 397.66 L600.57 398.57 L600.12 399.38 L595.51 399.83 L595.07 401.49 L594.81 402.31 L594.53 403.12 L598.12 406.03 L598.06 406.95 L597.42 407.62 L592.84 406.96 L592.01 408.47 L591.56 409.2 L591.1 409.92 L593.89 413.61 L593.61 414.49 L592.83 414.99 L588.54 413.25 L587.38 414.51 L586.77 415.12 L586.14 415.7 L587.97 419.95 L587.48 420.74 L586.61 421.04 L582.86 418.33 L581.43 419.27 L580.69 419.71 L579.94 420.13 L580.7 424.7 L580.04 425.35 L579.12 425.43 L576.13 421.9 L574.51 422.47 L573.69 422.72 L572.87 422.95 L572.51 427.56 L571.71 428.04 L570.8 427.9 L568.75 423.75 L567.04 423.92 L566.18 423.97 L565.32 424 L563.87 428.39 L562.99 428.65 L562.13 428.3 L561.13 423.79 L559.43 423.54 L558.58 423.38 L557.74 423.2 L555.28 427.12 L554.36 427.17 L553.62 426.62 L553.72 422 L552.13 421.35 L551.35 420.99 L550.58 420.62 L547.25 423.83 L546.35 423.66 L545.75 422.95 L546.96 418.48 L545.57 417.48 L544.9 416.94 L544.24 416.39 L540.24 418.72 L539.4 418.33 L539 417.5 L541.24 413.46 L540.13 412.15 L539.6 411.47 L539.09 410.78 L534.65 412.08 L533.93 411.5 L533.74 410.6 L536.88 407.21 L536.12 405.67 L535.77 404.88 L535.44 404.09 L530.82 404.29 L530.26 403.56 L530.29 402.64 L534.15 400.1 L533.78 398.42 L533.63 397.57 L533.5 396.72 L528.96 395.81 L528.59 394.97 L528.84 394.08 L533.2 392.54 L533.24 390.82 L533.29 389.96 L533.37 389.11 L529.19 387.14 L529.03 386.23 L529.48 385.42 L534.09 384.97 L534.53 383.31 L534.79 382.49 L535.07 381.68 L531.48 378.77 L531.54 377.85 L532.18 377.18 L536.76 377.84 L537.59 376.33 L538.04 375.6 L538.5 374.88 L535.71 371.19 L535.99 370.31 L536.77 369.81 L541.06 371.55 L542.22 370.29 L542.83 369.68 L543.46 369.1 L541.63 364.85 L542.12 364.06 L542.99 363.76 L546.74 366.47 L548.17 365.53 L548.91 365.09 L549.66 364.67 L548.9 360.1 L549.56 359.45 L550.48 359.37 L553.47 362.9 L555.09 362.33 L555.91 362.08 L556.73 361.85 L557.09 357.24 L557.89 356.76 L558.8 356.9 L560.85 361.05 L562.56 360.88 L563.42 360.83 L564.28 360.8 L565.73 356.41 L566.61 356.15 L567.47 356.5 L568.47 361.01 L570.17 361.26 L571.02 361.42 L571.86 361.6 L574.32 357.68 L575.24 357.63 L575.98 358.18 L575.88 362.8 L577.47 363.45 L578.25 363.81 L579.02 364.18 L582.35 360.97 L583.25 361.14 L583.85 361.85 L582.64 366.32 L584.03 367.32 L584.7 367.86 L585.36 368.41 L589.36 366.08 L590.2 366.47 L590.6 367.3 L588.36 371.34 L589.47 372.65 L590 373.33 L590.51 374.02 L594.95 372.72 L595.67 373.3 L595.86 374.2 L592.72 377.59 L593.48 379.13 L593.83 379.92 L594.16 380.71 L598.78 380.51 L599.34 381.24 L599.31 382.16 L595.45 384.7 L595.82 386.38 L595.97 387.23 L596.1 388.08 L600.64 388.99 L601.01 389.83 L600.76 390.72 L596.4 392.26Z M557.4 392.4 A7.4 7.4 0 1 1 572.2 392.4 A7.4 7.4 0 1 1 557.4 392.4Z M569.45 375.22 L568.89 374.62 L568.46 374.08 L568.14 373.57 L567.89 373.08 L567.7 372.6 L567.56 372.14 L567.46 371.68 L567.38 371.22 L567.32 370.77 L567.29 370.32 L567.26 369.88 L567.25 369.43 L567.26 368.99 L567.27 368.54 L567.3 368.1 L567.35 367.66 L567.42 367.23 L567.52 366.79 L567.66 366.36 L567.84 365.94 L568.09 365.53 L568.43 365.12 L568.88 364.74 L569.48 364.39 L572.53 365.07 L575.49 366.09 L578.32 367.43 L580.99 369.06 L583.45 370.99 L585.7 373.17 L587.68 375.58 L589.4 378.2 L590.81 380.99 L591.9 383.92 L592.67 386.95 L593.1 390.05 L593.19 393.18 L592.93 396.3 L592.33 399.37 L591.4 402.35 L590.79 402.7 L590.24 402.9 L589.72 402.99 L589.24 403 L588.78 402.94 L588.34 402.85 L587.91 402.71 L587.5 402.56 L587.09 402.38 L586.7 402.19 L586.3 401.98 L585.92 401.76 L585.54 401.53 L585.16 401.29 L584.79 401.03 L584.43 400.75 L584.07 400.46 L583.73 400.14 L583.4 399.78 L583.08 399.39 L582.78 398.93 L582.5 398.39 L582.24 397.75 L582 396.97 L582.37 395.26 L582.56 393.53 L582.59 391.79 L582.44 390.06 L582.13 388.34 L581.65 386.67 L581.01 385.05 L580.22 383.5 L579.27 382.04 L578.19 380.67 L576.98 379.42 L575.65 378.29 L574.22 377.3 L572.7 376.45 L571.1 375.75Z M577.36 405.02 L578.15 404.83 L578.84 404.73 L579.44 404.71 L579.99 404.74 L580.49 404.81 L580.97 404.92 L581.42 405.06 L581.85 405.22 L582.27 405.4 L582.68 405.59 L583.08 405.79 L583.47 406.01 L583.85 406.23 L584.22 406.47 L584.59 406.72 L584.95 406.98 L585.29 407.26 L585.61 407.56 L585.92 407.89 L586.19 408.26 L586.43 408.69 L586.61 409.18 L586.72 409.76 L586.72 410.46 L584.6 412.76 L582.24 414.81 L579.67 416.6 L576.92 418.09 L574.02 419.26 L571.01 420.11 L567.92 420.63 L564.8 420.8 L561.68 420.63 L558.59 420.11 L555.58 419.26 L552.68 418.09 L549.93 416.6 L547.36 414.81 L545 412.76 L542.88 410.46 L542.88 409.76 L542.99 409.18 L543.17 408.69 L543.41 408.26 L543.68 407.89 L543.99 407.56 L544.31 407.26 L544.65 406.98 L545.01 406.72 L545.38 406.47 L545.75 406.23 L546.13 406.01 L546.52 405.79 L546.92 405.59 L547.33 405.4 L547.75 405.22 L548.18 405.06 L548.63 404.92 L549.11 404.81 L549.61 404.74 L550.16 404.71 L550.76 404.73 L551.45 404.83 L552.24 405.02 L553.54 406.18 L554.94 407.22 L556.43 408.11 L558.01 408.85 L559.65 409.44 L561.34 409.86 L563.06 410.11 L564.8 410.2 L566.54 410.11 L568.26 409.86 L569.95 409.44 L571.59 408.85 L573.17 408.11 L574.66 407.22 L576.06 406.18Z M547.6 396.97 L547.36 397.75 L547.1 398.39 L546.82 398.93 L546.52 399.39 L546.2 399.78 L545.87 400.14 L545.53 400.46 L545.17 400.75 L544.81 401.03 L544.44 401.29 L544.06 401.53 L543.68 401.76 L543.3 401.98 L542.9 402.19 L542.51 402.38 L542.1 402.56 L541.69 402.71 L541.26 402.85 L540.82 402.94 L540.36 403 L539.88 402.99 L539.36 402.9 L538.81 402.7 L538.2 402.35 L537.27 399.37 L536.67 396.3 L536.41 393.18 L536.5 390.05 L536.93 386.95 L537.7 383.92 L538.79 380.99 L540.2 378.2 L541.92 375.58 L543.9 373.17 L546.15 370.99 L548.61 369.06 L551.28 367.43 L554.11 366.09 L557.07 365.07 L560.12 364.39 L560.72 364.74 L561.17 365.12 L561.51 365.53 L561.76 365.94 L561.94 366.36 L562.08 366.79 L562.18 367.23 L562.25 367.66 L562.3 368.1 L562.33 368.54 L562.34 368.99 L562.35 369.43 L562.34 369.88 L562.31 370.32 L562.28 370.77 L562.22 371.22 L562.14 371.68 L562.04 372.14 L561.9 372.6 L561.71 373.08 L561.46 373.57 L561.14 374.08 L560.71 374.62 L560.15 375.22 L558.5 375.75 L556.9 376.45 L555.38 377.3 L553.95 378.29 L552.62 379.42 L551.41 380.67 L550.33 382.04 L549.38 383.5 L548.59 385.05 L547.95 386.67 L547.47 388.34 L547.16 390.06 L547.01 391.79 L547.04 393.53 L547.23 395.26Z" fill="#62a090" fill-rule="evenodd" stroke="#62a090" stroke-width="0.8" stroke-linejoin="round"/>
<path d="M557.6 393.9 A7.4 7.4 0 0 0 570.8 396.9" fill="none" stroke="#0a0a0a" stroke-width="1.6"/>
<path d="M561.88 340.98 L562.02 341.57 L562.11 342.17 L566.6 343.24 L566.87 344.46 L566.45 345.62 L561.86 346.11 L561.48 347.27 L561.24 347.83 L560.96 348.37 L563.96 351.87 L563.47 353.01 L562.44 353.71 L558.44 351.41 L557.45 352.12 L556.93 352.43 L556.39 352.71 L556.75 357.3 L555.69 357.94 L554.45 357.89 L552.56 353.68 L551.35 353.68 L550.74 353.62 L550.14 353.53 L547.73 357.46 L546.5 357.35 L545.52 356.58 L546.47 352.07 L545.49 351.35 L545.03 350.95 L544.6 350.52 L540.34 352.29 L539.41 351.47 L539.07 350.27 L542.49 347.18 L542.12 346.02 L541.98 345.43 L541.89 344.83 L537.4 343.76 L537.13 342.54 L537.55 341.38 L542.14 340.89 L542.52 339.73 L542.76 339.17 L543.04 338.63 L540.04 335.13 L540.53 333.99 L541.56 333.29 L545.56 335.59 L546.55 334.88 L547.07 334.57 L547.61 334.29 L547.25 329.7 L548.31 329.06 L549.55 329.11 L551.44 333.32 L552.65 333.32 L553.26 333.38 L553.86 333.47 L556.27 329.54 L557.5 329.65 L558.48 330.42 L557.53 334.93 L558.51 335.65 L558.97 336.05 L559.4 336.48 L563.66 334.71 L564.59 335.53 L564.93 336.73 L561.51 339.82Z" transform="translate(-1.1,1.3)" fill="#0a0a0a" stroke="#0a0a0a" stroke-width="1.4" stroke-linejoin="round"/>
<path d="M561.88 340.98 L562.02 341.57 L562.11 342.17 L566.6 343.24 L566.87 344.46 L566.45 345.62 L561.86 346.11 L561.48 347.27 L561.24 347.83 L560.96 348.37 L563.96 351.87 L563.47 353.01 L562.44 353.71 L558.44 351.41 L557.45 352.12 L556.93 352.43 L556.39 352.71 L556.75 357.3 L555.69 357.94 L554.45 357.89 L552.56 353.68 L551.35 353.68 L550.74 353.62 L550.14 353.53 L547.73 357.46 L546.5 357.35 L545.52 356.58 L546.47 352.07 L545.49 351.35 L545.03 350.95 L544.6 350.52 L540.34 352.29 L539.41 351.47 L539.07 350.27 L542.49 347.18 L542.12 346.02 L541.98 345.43 L541.89 344.83 L537.4 343.76 L537.13 342.54 L537.55 341.38 L542.14 340.89 L542.52 339.73 L542.76 339.17 L543.04 338.63 L540.04 335.13 L540.53 333.99 L541.56 333.29 L545.56 335.59 L546.55 334.88 L547.07 334.57 L547.61 334.29 L547.25 329.7 L548.31 329.06 L549.55 329.11 L551.44 333.32 L552.65 333.32 L553.26 333.38 L553.86 333.47 L556.27 329.54 L557.5 329.65 L558.48 330.42 L557.53 334.93 L558.51 335.65 L558.97 336.05 L559.4 336.48 L563.66 334.71 L564.59 335.53 L564.93 336.73 L561.51 339.82Z M545.6 343.5 A6.4 6.4 0 1 1 558.4 343.5 A6.4 6.4 0 1 1 545.6 343.5Z" fill="#2aec2a" fill-rule="evenodd" stroke="#2aec2a" stroke-width="1.2" stroke-linejoin="round"/>
<circle cx="551.8" cy="344.1" r="5.9" fill="#0a0a0a"/>
<circle cx="552.2" cy="342.9" r="5.7" fill="#f49cf8"/>
<path d="M569.89 446.23 L569.84 446.86 L569.75 447.49 L574.28 450.05 L574.16 451.36 L573.38 452.43 L568.29 451.32 L567.55 452.35 L567.14 452.83 L566.7 453.29 L568.86 458.02 L567.99 459.01 L566.73 459.42 L563.27 455.53 L562.07 455.93 L561.45 456.08 L560.83 456.19 L559.79 461.29 L558.51 461.58 L557.25 461.16 L556.73 455.98 L555.52 455.6 L554.94 455.36 L554.37 455.08 L550.53 458.6 L549.32 458.08 L548.55 457.01 L551.18 452.51 L550.42 451.49 L550.09 450.95 L549.8 450.4 L544.62 450.99 L543.95 449.85 L543.96 448.53 L548.73 446.43 L548.71 445.17 L548.76 444.54 L548.85 443.91 L544.32 441.35 L544.44 440.04 L545.22 438.97 L550.31 440.08 L551.05 439.05 L551.46 438.57 L551.9 438.11 L549.74 433.38 L550.61 432.39 L551.87 431.98 L555.33 435.87 L556.53 435.47 L557.15 435.32 L557.77 435.21 L558.81 430.11 L560.09 429.82 L561.35 430.24 L561.87 435.42 L563.08 435.8 L563.66 436.04 L564.23 436.32 L568.07 432.8 L569.28 433.32 L570.05 434.39 L567.42 438.89 L568.18 439.91 L568.51 440.45 L568.8 441 L573.98 440.41 L574.65 441.55 L574.64 442.87 L569.87 444.97Z" transform="translate(-1.1,1.3)" fill="#0a0a0a" stroke="#0a0a0a" stroke-width="1.4" stroke-linejoin="round"/>
<path d="M569.89 446.23 L569.84 446.86 L569.75 447.49 L574.28 450.05 L574.16 451.36 L573.38 452.43 L568.29 451.32 L567.55 452.35 L567.14 452.83 L566.7 453.29 L568.86 458.02 L567.99 459.01 L566.73 459.42 L563.27 455.53 L562.07 455.93 L561.45 456.08 L560.83 456.19 L559.79 461.29 L558.51 461.58 L557.25 461.16 L556.73 455.98 L555.52 455.6 L554.94 455.36 L554.37 455.08 L550.53 458.6 L549.32 458.08 L548.55 457.01 L551.18 452.51 L550.42 451.49 L550.09 450.95 L549.8 450.4 L544.62 450.99 L543.95 449.85 L543.96 448.53 L548.73 446.43 L548.71 445.17 L548.76 444.54 L548.85 443.91 L544.32 441.35 L544.44 440.04 L545.22 438.97 L550.31 440.08 L551.05 439.05 L551.46 438.57 L551.9 438.11 L549.74 433.38 L550.61 432.39 L551.87 431.98 L555.33 435.87 L556.53 435.47 L557.15 435.32 L557.77 435.21 L558.81 430.11 L560.09 429.82 L561.35 430.24 L561.87 435.42 L563.08 435.8 L563.66 436.04 L564.23 436.32 L568.07 432.8 L569.28 433.32 L570.05 434.39 L567.42 438.89 L568.18 439.91 L568.51 440.45 L568.8 441 L573.98 440.41 L574.65 441.55 L574.64 442.87 L569.87 444.97Z M552.5 445.7 A6.8 6.8 0 1 1 566.1 445.7 A6.8 6.8 0 1 1 552.5 445.7Z" fill="#2aec2a" fill-rule="evenodd" stroke="#2aec2a" stroke-width="1.2" stroke-linejoin="round"/>
<circle cx="559.1" cy="446.3" r="6.3" fill="#0a0a0a"/>
<circle cx="559.5" cy="445.1" r="6.1" fill="#f49cf8"/>
<path d="M710.59 400.5 L710.48 401.28 L710.36 402.06 L715.37 404.55 L715.3 406.07 L714.6 407.41 L709.02 407.05 L708.43 408.52 L708.11 409.25 L707.77 409.96 L711.87 413.76 L711.38 415.19 L710.33 416.29 L705.07 414.37 L704.1 415.61 L703.58 416.22 L703.06 416.81 L705.92 421.61 L705.05 422.85 L703.73 423.6 L699.23 420.28 L697.94 421.2 L697.28 421.63 L696.61 422.05 L698.01 427.46 L696.82 428.41 L695.34 428.75 L691.96 424.3 L690.46 424.82 L689.71 425.05 L688.94 425.26 L688.76 430.85 L687.35 431.42 L685.84 431.34 L683.85 426.11 L682.27 426.19 L681.47 426.2 L680.68 426.19 L678.93 431.5 L677.42 431.65 L675.99 431.14 L675.55 425.57 L674.01 425.2 L673.25 424.98 L672.5 424.74 L669.32 429.35 L667.83 429.07 L666.6 428.18 L667.75 422.71 L666.38 421.92 L665.71 421.5 L665.05 421.06 L660.71 424.58 L659.35 423.89 L658.42 422.69 L661.07 417.76 L659.97 416.62 L659.45 416.03 L658.94 415.42 L653.78 417.58 L652.68 416.53 L652.12 415.12 L656.05 411.14 L655.32 409.73 L654.99 409.01 L654.67 408.29 L649.11 408.9 L648.35 407.59 L648.21 406.08 L653.1 403.37 L652.8 401.81 L652.68 401.03 L652.58 400.24 L647.07 399.27 L646.71 397.8 L647.01 396.31 L652.46 395.08 L652.61 393.5 L652.72 392.72 L652.84 391.94 L647.83 389.45 L647.9 387.93 L648.6 386.59 L654.18 386.95 L654.77 385.48 L655.09 384.75 L655.43 384.04 L651.33 380.24 L651.82 378.81 L652.87 377.71 L658.13 379.63 L659.1 378.39 L659.62 377.78 L660.14 377.19 L657.28 372.39 L658.15 371.15 L659.47 370.4 L663.97 373.72 L665.26 372.8 L665.92 372.37 L666.59 371.95 L665.19 366.54 L666.38 365.59 L667.86 365.25 L671.24 369.7 L672.74 369.18 L673.49 368.95 L674.26 368.74 L674.44 363.15 L675.85 362.58 L677.36 362.66 L679.35 367.89 L680.93 367.81 L681.73 367.8 L682.52 367.81 L684.27 362.5 L685.78 362.35 L687.21 362.86 L687.65 368.43 L689.19 368.8 L689.95 369.02 L690.7 369.26 L693.88 364.65 L695.37 364.93 L696.6 365.82 L695.45 371.29 L696.82 372.08 L697.49 372.5 L698.15 372.94 L702.49 369.42 L703.85 370.11 L704.78 371.31 L702.13 376.24 L703.23 377.38 L703.75 377.97 L704.26 378.58 L709.42 376.42 L710.52 377.47 L711.08 378.88 L707.15 382.86 L707.88 384.27 L708.21 384.99 L708.53 385.71 L714.09 385.1 L714.85 386.41 L714.99 387.92 L710.1 390.63 L710.4 392.19 L710.52 392.97 L710.62 393.76 L716.13 394.73 L716.49 396.2 L716.19 397.69 L710.74 398.92Z M677.07 410.27 L677.31 410.68 L677.51 411.06 L677.67 411.43 L677.8 411.79 L677.91 412.13 L677.99 412.47 L678.06 412.81 L678.1 413.14 L678.14 413.46 L678.16 413.79 L678.17 414.11 L678.17 414.43 L678.16 414.74 L678.14 415.06 L678.11 415.37 L678.07 415.68 L678.01 415.98 L677.93 416.29 L677.83 416.59 L677.71 416.88 L677.55 417.17 L677.36 417.45 L677.12 417.72 L676.83 417.98 L674.63 417.37 L672.51 416.54 L670.49 415.49 L668.59 414.24 L666.82 412.8 L665.22 411.18 L663.79 409.41 L662.55 407.5 L661.51 405.47 L660.69 403.35 L660.1 401.15 L659.73 398.9 L659.6 396.63 L659.71 394.35 L660.04 392.1 L660.62 389.89 L660.98 389.77 L661.34 389.7 L661.68 389.67 L662 389.68 L662.32 389.72 L662.63 389.79 L662.93 389.87 L663.23 389.97 L663.52 390.09 L663.8 390.21 L664.08 390.35 L664.36 390.5 L664.64 390.66 L664.91 390.83 L665.18 391.02 L665.44 391.21 L665.71 391.42 L665.96 391.64 L666.22 391.88 L666.46 392.14 L666.71 392.43 L666.94 392.76 L667.18 393.12 L667.41 393.54 L667.19 394.84 L667.1 396.16 L667.13 397.48 L667.28 398.8 L667.55 400.09 L667.94 401.35 L668.43 402.58 L669.04 403.75 L669.75 404.86 L670.57 405.91 L671.47 406.87 L672.45 407.75 L673.52 408.54 L674.64 409.22 L675.83 409.8Z M671.94 385.69 L671.47 385.7 L671.03 385.68 L670.63 385.64 L670.26 385.57 L669.91 385.49 L669.57 385.39 L669.25 385.28 L668.94 385.15 L668.64 385.02 L668.35 384.88 L668.07 384.73 L667.79 384.57 L667.52 384.4 L667.26 384.23 L667 384.05 L666.76 383.85 L666.52 383.65 L666.3 383.43 L666.09 383.19 L665.9 382.94 L665.72 382.66 L665.58 382.35 L665.46 382.01 L665.39 381.63 L667.01 380.03 L668.79 378.61 L670.71 377.38 L672.74 376.36 L674.87 375.55 L677.08 374.97 L679.33 374.62 L681.6 374.5 L683.87 374.62 L686.12 374.97 L688.33 375.55 L690.46 376.36 L692.49 377.38 L694.41 378.61 L696.19 380.03 L697.81 381.63 L697.74 382.01 L697.62 382.35 L697.48 382.66 L697.3 382.94 L697.11 383.19 L696.9 383.43 L696.68 383.65 L696.44 383.85 L696.2 384.05 L695.94 384.23 L695.68 384.4 L695.41 384.57 L695.13 384.73 L694.85 384.88 L694.56 385.02 L694.26 385.15 L693.95 385.28 L693.63 385.39 L693.29 385.49 L692.94 385.57 L692.57 385.64 L692.17 385.68 L691.73 385.7 L691.26 385.69 L690.24 384.85 L689.14 384.12 L687.98 383.48 L686.77 382.95 L685.52 382.54 L684.23 382.24 L682.92 382.06 L681.6 382 L680.28 382.06 L678.97 382.24 L677.68 382.54 L676.43 382.95 L675.22 383.48 L674.06 384.12 L672.96 384.85Z M695.79 393.54 L696.02 393.12 L696.26 392.76 L696.49 392.43 L696.74 392.14 L696.98 391.88 L697.24 391.64 L697.49 391.42 L697.76 391.21 L698.02 391.02 L698.29 390.83 L698.56 390.66 L698.84 390.5 L699.12 390.35 L699.4 390.21 L699.68 390.09 L699.97 389.97 L700.27 389.87 L700.57 389.79 L700.88 389.72 L701.2 389.68 L701.52 389.67 L701.86 389.7 L702.22 389.77 L702.58 389.89 L703.16 392.1 L703.49 394.35 L703.6 396.63 L703.47 398.9 L703.1 401.15 L702.51 403.35 L701.69 405.47 L700.65 407.5 L699.41 409.41 L697.98 411.18 L696.38 412.8 L694.61 414.24 L692.71 415.49 L690.69 416.54 L688.57 417.37 L686.37 417.98 L686.08 417.72 L685.84 417.45 L685.65 417.17 L685.49 416.88 L685.37 416.59 L685.27 416.29 L685.19 415.98 L685.13 415.68 L685.09 415.37 L685.06 415.06 L685.04 414.74 L685.03 414.43 L685.03 414.11 L685.04 413.79 L685.06 413.46 L685.1 413.14 L685.14 412.81 L685.21 412.47 L685.29 412.13 L685.4 411.79 L685.53 411.43 L685.69 411.06 L685.89 410.68 L686.13 410.27 L687.37 409.8 L688.56 409.22 L689.68 408.54 L690.75 407.75 L691.73 406.87 L692.63 405.91 L693.45 404.86 L694.16 403.75 L694.77 402.58 L695.26 401.35 L695.65 400.09 L695.92 398.8 L696.07 397.48 L696.1 396.16 L696.01 394.84Z" transform="translate(-1.8,1.3)" fill="#0a0a0a" fill-rule="evenodd" stroke="#0a0a0a" stroke-width="1" stroke-linejoin="round"/>
<path d="M710.59 400.5 L710.48 401.28 L710.36 402.06 L715.37 404.55 L715.3 406.07 L714.6 407.41 L709.02 407.05 L708.43 408.52 L708.11 409.25 L707.77 409.96 L711.87 413.76 L711.38 415.19 L710.33 416.29 L705.07 414.37 L704.1 415.61 L703.58 416.22 L703.06 416.81 L705.92 421.61 L705.05 422.85 L703.73 423.6 L699.23 420.28 L697.94 421.2 L697.28 421.63 L696.61 422.05 L698.01 427.46 L696.82 428.41 L695.34 428.75 L691.96 424.3 L690.46 424.82 L689.71 425.05 L688.94 425.26 L688.76 430.85 L687.35 431.42 L685.84 431.34 L683.85 426.11 L682.27 426.19 L681.47 426.2 L680.68 426.19 L678.93 431.5 L677.42 431.65 L675.99 431.14 L675.55 425.57 L674.01 425.2 L673.25 424.98 L672.5 424.74 L669.32 429.35 L667.83 429.07 L666.6 428.18 L667.75 422.71 L666.38 421.92 L665.71 421.5 L665.05 421.06 L660.71 424.58 L659.35 423.89 L658.42 422.69 L661.07 417.76 L659.97 416.62 L659.45 416.03 L658.94 415.42 L653.78 417.58 L652.68 416.53 L652.12 415.12 L656.05 411.14 L655.32 409.73 L654.99 409.01 L654.67 408.29 L649.11 408.9 L648.35 407.59 L648.21 406.08 L653.1 403.37 L652.8 401.81 L652.68 401.03 L652.58 400.24 L647.07 399.27 L646.71 397.8 L647.01 396.31 L652.46 395.08 L652.61 393.5 L652.72 392.72 L652.84 391.94 L647.83 389.45 L647.9 387.93 L648.6 386.59 L654.18 386.95 L654.77 385.48 L655.09 384.75 L655.43 384.04 L651.33 380.24 L651.82 378.81 L652.87 377.71 L658.13 379.63 L659.1 378.39 L659.62 377.78 L660.14 377.19 L657.28 372.39 L658.15 371.15 L659.47 370.4 L663.97 373.72 L665.26 372.8 L665.92 372.37 L666.59 371.95 L665.19 366.54 L666.38 365.59 L667.86 365.25 L671.24 369.7 L672.74 369.18 L673.49 368.95 L674.26 368.74 L674.44 363.15 L675.85 362.58 L677.36 362.66 L679.35 367.89 L680.93 367.81 L681.73 367.8 L682.52 367.81 L684.27 362.5 L685.78 362.35 L687.21 362.86 L687.65 368.43 L689.19 368.8 L689.95 369.02 L690.7 369.26 L693.88 364.65 L695.37 364.93 L696.6 365.82 L695.45 371.29 L696.82 372.08 L697.49 372.5 L698.15 372.94 L702.49 369.42 L703.85 370.11 L704.78 371.31 L702.13 376.24 L703.23 377.38 L703.75 377.97 L704.26 378.58 L709.42 376.42 L710.52 377.47 L711.08 378.88 L707.15 382.86 L707.88 384.27 L708.21 384.99 L708.53 385.71 L714.09 385.1 L714.85 386.41 L714.99 387.92 L710.1 390.63 L710.4 392.19 L710.52 392.97 L710.62 393.76 L716.13 394.73 L716.49 396.2 L716.19 397.69 L710.74 398.92Z M677.07 410.27 L677.31 410.68 L677.51 411.06 L677.67 411.43 L677.8 411.79 L677.91 412.13 L677.99 412.47 L678.06 412.81 L678.1 413.14 L678.14 413.46 L678.16 413.79 L678.17 414.11 L678.17 414.43 L678.16 414.74 L678.14 415.06 L678.11 415.37 L678.07 415.68 L678.01 415.98 L677.93 416.29 L677.83 416.59 L677.71 416.88 L677.55 417.17 L677.36 417.45 L677.12 417.72 L676.83 417.98 L674.63 417.37 L672.51 416.54 L670.49 415.49 L668.59 414.24 L666.82 412.8 L665.22 411.18 L663.79 409.41 L662.55 407.5 L661.51 405.47 L660.69 403.35 L660.1 401.15 L659.73 398.9 L659.6 396.63 L659.71 394.35 L660.04 392.1 L660.62 389.89 L660.98 389.77 L661.34 389.7 L661.68 389.67 L662 389.68 L662.32 389.72 L662.63 389.79 L662.93 389.87 L663.23 389.97 L663.52 390.09 L663.8 390.21 L664.08 390.35 L664.36 390.5 L664.64 390.66 L664.91 390.83 L665.18 391.02 L665.44 391.21 L665.71 391.42 L665.96 391.64 L666.22 391.88 L666.46 392.14 L666.71 392.43 L666.94 392.76 L667.18 393.12 L667.41 393.54 L667.19 394.84 L667.1 396.16 L667.13 397.48 L667.28 398.8 L667.55 400.09 L667.94 401.35 L668.43 402.58 L669.04 403.75 L669.75 404.86 L670.57 405.91 L671.47 406.87 L672.45 407.75 L673.52 408.54 L674.64 409.22 L675.83 409.8Z M671.94 385.69 L671.47 385.7 L671.03 385.68 L670.63 385.64 L670.26 385.57 L669.91 385.49 L669.57 385.39 L669.25 385.28 L668.94 385.15 L668.64 385.02 L668.35 384.88 L668.07 384.73 L667.79 384.57 L667.52 384.4 L667.26 384.23 L667 384.05 L666.76 383.85 L666.52 383.65 L666.3 383.43 L666.09 383.19 L665.9 382.94 L665.72 382.66 L665.58 382.35 L665.46 382.01 L665.39 381.63 L667.01 380.03 L668.79 378.61 L670.71 377.38 L672.74 376.36 L674.87 375.55 L677.08 374.97 L679.33 374.62 L681.6 374.5 L683.87 374.62 L686.12 374.97 L688.33 375.55 L690.46 376.36 L692.49 377.38 L694.41 378.61 L696.19 380.03 L697.81 381.63 L697.74 382.01 L697.62 382.35 L697.48 382.66 L697.3 382.94 L697.11 383.19 L696.9 383.43 L696.68 383.65 L696.44 383.85 L696.2 384.05 L695.94 384.23 L695.68 384.4 L695.41 384.57 L695.13 384.73 L694.85 384.88 L694.56 385.02 L694.26 385.15 L693.95 385.28 L693.63 385.39 L693.29 385.49 L692.94 385.57 L692.57 385.64 L692.17 385.68 L691.73 385.7 L691.26 385.69 L690.24 384.85 L689.14 384.12 L687.98 383.48 L686.77 382.95 L685.52 382.54 L684.23 382.24 L682.92 382.06 L681.6 382 L680.28 382.06 L678.97 382.24 L677.68 382.54 L676.43 382.95 L675.22 383.48 L674.06 384.12 L672.96 384.85Z M695.79 393.54 L696.02 393.12 L696.26 392.76 L696.49 392.43 L696.74 392.14 L696.98 391.88 L697.24 391.64 L697.49 391.42 L697.76 391.21 L698.02 391.02 L698.29 390.83 L698.56 390.66 L698.84 390.5 L699.12 390.35 L699.4 390.21 L699.68 390.09 L699.97 389.97 L700.27 389.87 L700.57 389.79 L700.88 389.72 L701.2 389.68 L701.52 389.67 L701.86 389.7 L702.22 389.77 L702.58 389.89 L703.16 392.1 L703.49 394.35 L703.6 396.63 L703.47 398.9 L703.1 401.15 L702.51 403.35 L701.69 405.47 L700.65 407.5 L699.41 409.41 L697.98 411.18 L696.38 412.8 L694.61 414.24 L692.71 415.49 L690.69 416.54 L688.57 417.37 L686.37 417.98 L686.08 417.72 L685.84 417.45 L685.65 417.17 L685.49 416.88 L685.37 416.59 L685.27 416.29 L685.19 415.98 L685.13 415.68 L685.09 415.37 L685.06 415.06 L685.04 414.74 L685.03 414.43 L685.03 414.11 L685.04 413.79 L685.06 413.46 L685.1 413.14 L685.14 412.81 L685.21 412.47 L685.29 412.13 L685.4 411.79 L685.53 411.43 L685.69 411.06 L685.89 410.68 L686.13 410.27 L687.37 409.8 L688.56 409.22 L689.68 408.54 L690.75 407.75 L691.73 406.87 L692.63 405.91 L693.45 404.86 L694.16 403.75 L694.77 402.58 L695.26 401.35 L695.65 400.09 L695.92 398.8 L696.07 397.48 L696.1 396.16 L696.01 394.84Z" fill="#ff2020" fill-rule="evenodd" stroke="#ff2020" stroke-width="0.9" stroke-linejoin="round"/>
<path d="M663.5 392 A21.5 21.5 0 0 1 696 381" fill="none" stroke="#0a0a0a" stroke-width="2"/>
<path d="M693.48 396.93 L693.35 397.47 L693.2 398 L697.46 400.91 L697.27 402.05 L696.48 402.89 L691.59 401.25 L690.89 402.12 L690.51 402.52 L690.12 402.91 L692.35 407.56 L691.62 408.45 L690.51 408.78 L687.1 404.91 L686.06 405.32 L685.53 405.48 L684.99 405.62 L684.6 410.76 L683.52 411.17 L682.4 410.9 L681.38 405.84 L680.27 405.68 L679.73 405.55 L679.2 405.4 L676.29 409.66 L675.15 409.47 L674.31 408.68 L675.95 403.79 L675.08 403.09 L674.68 402.71 L674.29 402.32 L669.64 404.55 L668.75 403.82 L668.42 402.71 L672.29 399.3 L671.88 398.26 L671.72 397.73 L671.58 397.19 L666.44 396.8 L666.03 395.72 L666.3 394.6 L671.36 393.58 L671.52 392.47 L671.65 391.93 L671.8 391.4 L667.54 388.49 L667.73 387.35 L668.52 386.51 L673.41 388.15 L674.11 387.28 L674.49 386.88 L674.88 386.49 L672.65 381.84 L673.38 380.95 L674.49 380.62 L677.9 384.49 L678.94 384.08 L679.47 383.92 L680.01 383.78 L680.4 378.64 L681.48 378.23 L682.6 378.5 L683.62 383.56 L684.73 383.72 L685.27 383.85 L685.8 384 L688.71 379.74 L689.85 379.93 L690.69 380.72 L689.05 385.61 L689.92 386.31 L690.32 386.69 L690.71 387.08 L695.36 384.85 L696.25 385.58 L696.58 386.69 L692.71 390.1 L693.12 391.14 L693.28 391.67 L693.42 392.21 L698.56 392.6 L698.97 393.68 L698.7 394.8 L693.64 395.82Z" transform="translate(-1.1,1.3)" fill="#0a0a0a" stroke="#0a0a0a" stroke-width="1.4" stroke-linejoin="round"/>
<path d="M693.48 396.93 L693.35 397.47 L693.2 398 L697.46 400.91 L697.27 402.05 L696.48 402.89 L691.59 401.25 L690.89 402.12 L690.51 402.52 L690.12 402.91 L692.35 407.56 L691.62 408.45 L690.51 408.78 L687.1 404.91 L686.06 405.32 L685.53 405.48 L684.99 405.62 L684.6 410.76 L683.52 411.17 L682.4 410.9 L681.38 405.84 L680.27 405.68 L679.73 405.55 L679.2 405.4 L676.29 409.66 L675.15 409.47 L674.31 408.68 L675.95 403.79 L675.08 403.09 L674.68 402.71 L674.29 402.32 L669.64 404.55 L668.75 403.82 L668.42 402.71 L672.29 399.3 L671.88 398.26 L671.72 397.73 L671.58 397.19 L666.44 396.8 L666.03 395.72 L666.3 394.6 L671.36 393.58 L671.52 392.47 L671.65 391.93 L671.8 391.4 L667.54 388.49 L667.73 387.35 L668.52 386.51 L673.41 388.15 L674.11 387.28 L674.49 386.88 L674.88 386.49 L672.65 381.84 L673.38 380.95 L674.49 380.62 L677.9 384.49 L678.94 384.08 L679.47 383.92 L680.01 383.78 L680.4 378.64 L681.48 378.23 L682.6 378.5 L683.62 383.56 L684.73 383.72 L685.27 383.85 L685.8 384 L688.71 379.74 L689.85 379.93 L690.69 380.72 L689.05 385.61 L689.92 386.31 L690.32 386.69 L690.71 387.08 L695.36 384.85 L696.25 385.58 L696.58 386.69 L692.71 390.1 L693.12 391.14 L693.28 391.67 L693.42 392.21 L698.56 392.6 L698.97 393.68 L698.7 394.8 L693.64 395.82Z M675.7 394.7 A6.8 6.8 0 1 1 689.3 394.7 A6.8 6.8 0 1 1 675.7 394.7Z" fill="#2aec2a" fill-rule="evenodd" stroke="#2aec2a" stroke-width="1.2" stroke-linejoin="round"/>
<circle cx="682.3" cy="395.3" r="6.3" fill="#0a0a0a"/>
<circle cx="682.7" cy="394.1" r="6.1" fill="#f49cf8"/>
<path d="M699.89 213.5 L695.89 215.6 Q693.69 217.2 695.39 219 L699.89 221Z" transform="translate(-1.4,1.6)" fill="#101000"/>
<path d="M699.89 213.5 L695.89 215.6 Q693.69 217.2 695.39 219 L699.89 221Z" fill="#f4f040"/>
<path d="M700.82 222.95 L696.82 225.05 Q694.62 226.65 696.32 228.45 L700.82 230.45Z" transform="translate(-1.4,1.6)" fill="#101000"/>
<path d="M700.82 222.95 L696.82 225.05 Q694.62 226.65 696.32 228.45 L700.82 230.45Z" fill="#f4f040"/>
<path d="M701.76 232.4 L697.76 234.5 Q695.56 236.1 697.26 237.9 L701.76 239.9Z" transform="translate(-1.4,1.6)" fill="#101000"/>
<path d="M701.76 232.4 L697.76 234.5 Q695.56 236.1 697.26 237.9 L701.76 239.9Z" fill="#f4f040"/>
<path d="M702.69 241.85 L698.69 243.95 Q696.49 245.55 698.19 247.35 L702.69 249.35Z" transform="translate(-1.4,1.6)" fill="#101000"/>
<path d="M702.69 241.85 L698.69 243.95 Q696.49 245.55 698.19 247.35 L702.69 249.35Z" fill="#f4f040"/>
<path d="M703.63 251.3 L699.63 253.4 Q697.43 255 699.13 256.8 L703.63 258.8Z" transform="translate(-1.4,1.6)" fill="#101000"/>
<path d="M703.63 251.3 L699.63 253.4 Q697.43 255 699.13 256.8 L703.63 258.8Z" fill="#f4f040"/>
<path d="M704.56 260.75 L700.56 262.85 Q698.36 264.45 700.06 266.25 L704.56 268.25Z" transform="translate(-1.4,1.6)" fill="#101000"/>
<path d="M704.56 260.75 L700.56 262.85 Q698.36 264.45 700.06 266.25 L704.56 268.25Z" fill="#f4f040"/>
<path d="M705.5 270.2 L701.5 272.3 Q699.3 273.9 701 275.7 L705.5 277.7Z" transform="translate(-1.4,1.6)" fill="#101000"/>
<path d="M705.5 270.2 L701.5 272.3 Q699.3 273.9 701 275.7 L705.5 277.7Z" fill="#f4f040"/>
<path d="M706.43 279.65 L702.43 281.75 Q700.23 283.35 701.93 285.15 L706.43 287.15Z" transform="translate(-1.4,1.6)" fill="#101000"/>
<path d="M706.43 279.65 L702.43 281.75 Q700.23 283.35 701.93 285.15 L706.43 287.15Z" fill="#f4f040"/>
<path d="M707.37 289.1 L703.37 291.2 Q701.17 292.8 702.87 294.6 L707.37 296.6Z" transform="translate(-1.4,1.6)" fill="#101000"/>
<path d="M707.37 289.1 L703.37 291.2 Q701.17 292.8 702.87 294.6 L707.37 296.6Z" fill="#f4f040"/>
<path d="M708.31 298.55 L704.31 300.65 Q702.11 302.25 703.81 304.05 L708.31 306.05Z" transform="translate(-1.4,1.6)" fill="#101000"/>
<path d="M708.31 298.55 L704.31 300.65 Q702.11 302.25 703.81 304.05 L708.31 306.05Z" fill="#f4f040"/>
<path d="M709.24 308 L705.24 310.1 Q703.04 311.7 704.74 313.5 L709.24 315.5Z" transform="translate(-1.4,1.6)" fill="#101000"/>
<path d="M709.24 308 L705.24 310.1 Q703.04 311.7 704.74 313.5 L709.24 315.5Z" fill="#f4f040"/>
<path d="M710.18 317.45 L706.18 319.55 Q703.98 321.15 705.68 322.95 L710.18 324.95Z" transform="translate(-1.4,1.6)" fill="#101000"/>
<path d="M710.18 317.45 L706.18 319.55 Q703.98 321.15 705.68 322.95 L710.18 324.95Z" fill="#f4f040"/>
<path d="M711.11 326.9 L707.11 329 Q704.91 330.6 706.61 332.4 L711.11 334.4Z" transform="translate(-1.4,1.6)" fill="#101000"/>
<path d="M711.11 326.9 L707.11 329 Q704.91 330.6 706.61 332.4 L711.11 334.4Z" fill="#f4f040"/>
<path d="M712.05 336.35 L708.05 338.45 Q705.85 340.05 707.55 341.85 L712.05 343.85Z" transform="translate(-1.4,1.6)" fill="#101000"/>
<path d="M712.05 336.35 L708.05 338.45 Q705.85 340.05 707.55 341.85 L712.05 343.85Z" fill="#f4f040"/>
<path d="M712.98 345.8 L708.98 347.9 Q706.78 349.5 708.48 351.3 L712.98 353.3Z" transform="translate(-1.4,1.6)" fill="#101000"/>
<path d="M712.98 345.8 L708.98 347.9 Q706.78 349.5 708.48 351.3 L712.98 353.3Z" fill="#f4f040"/>
<path d="M713.92 355.25 L709.92 357.35 Q707.72 358.95 709.42 360.75 L713.92 362.75Z" transform="translate(-1.4,1.6)" fill="#101000"/>
<path d="M713.92 355.25 L709.92 357.35 Q707.72 358.95 709.42 360.75 L713.92 362.75Z" fill="#f4f040"/>
<path d="M714.85 364.7 L710.85 366.8 Q708.65 368.4 710.35 370.2 L714.85 372.2Z" transform="translate(-1.4,1.6)" fill="#101000"/>
<path d="M714.85 364.7 L710.85 366.8 Q708.65 368.4 710.35 370.2 L714.85 372.2Z" fill="#f4f040"/>
<path d="M715.79 374.15 L711.79 376.25 Q709.59 377.85 711.29 379.65 L715.79 381.65Z" transform="translate(-1.4,1.6)" fill="#101000"/>
<path d="M715.79 374.15 L711.79 376.25 Q709.59 377.85 711.29 379.65 L715.79 381.65Z" fill="#f4f040"/>
<path d="M716.73 383.6 L712.73 385.7 Q710.53 387.3 712.23 389.1 L716.73 391.1Z" transform="translate(-1.4,1.6)" fill="#101000"/>
<path d="M716.73 383.6 L712.73 385.7 Q710.53 387.3 712.23 389.1 L716.73 391.1Z" fill="#f4f040"/>
<path d="M717.66 393.05 L713.66 395.15 Q711.46 396.75 713.16 398.55 L717.66 400.55Z" transform="translate(-1.4,1.6)" fill="#101000"/>
<path d="M717.66 393.05 L713.66 395.15 Q711.46 396.75 713.16 398.55 L717.66 400.55Z" fill="#f4f040"/>
<path d="M718.6 402.5 L714.6 404.6 Q712.4 406.2 714.1 408 L718.6 410Z" transform="translate(-1.4,1.6)" fill="#101000"/>
<path d="M718.6 402.5 L714.6 404.6 Q712.4 406.2 714.1 408 L718.6 410Z" fill="#f4f040"/>
<path d="M719.53 411.95 L715.53 414.05 Q713.33 415.65 715.03 417.45 L719.53 419.45Z" transform="translate(-1.4,1.6)" fill="#101000"/>
<path d="M719.53 411.95 L715.53 414.05 Q713.33 415.65 715.03 417.45 L719.53 419.45Z" fill="#f4f040"/>
<path d="M720.47 421.4 L716.47 423.5 Q714.27 425.1 715.97 426.9 L720.47 428.9Z" transform="translate(-1.4,1.6)" fill="#101000"/>
<path d="M720.47 421.4 L716.47 423.5 Q714.27 425.1 715.97 426.9 L720.47 428.9Z" fill="#f4f040"/>
<path d="M721.4 430.85 L717.4 432.95 Q715.2 434.55 716.9 436.35 L721.4 438.35Z" transform="translate(-1.4,1.6)" fill="#101000"/>
<path d="M721.4 430.85 L717.4 432.95 Q715.2 434.55 716.9 436.35 L721.4 438.35Z" fill="#f4f040"/>
<path d="M722.34 440.3 L718.34 442.4 Q716.14 444 717.84 445.8 L722.34 447.8Z" transform="translate(-1.4,1.6)" fill="#101000"/>
<path d="M722.34 440.3 L718.34 442.4 Q716.14 444 717.84 445.8 L722.34 447.8Z" fill="#f4f040"/>
<path d="M723.27 449.75 L719.27 451.85 Q717.07 453.45 718.77 455.25 L723.27 457.25Z" transform="translate(-1.4,1.6)" fill="#101000"/>
<path d="M723.27 449.75 L719.27 451.85 Q717.07 453.45 718.77 455.25 L723.27 457.25Z" fill="#f4f040"/>
<path d="M701 158 Q691 165 689.5 180 Q689.5 192 697 199 L704 180Z" fill="url(#rbTop)" stroke="#1a1a00" stroke-width="0.8"/>
<path d="M722.5 474 Q718.5 490 720 502 Q724 512 736 514 Q750 514 755.5 505 Q759 496 758 476Z" fill="#d0d000"/>
<line x1="728.08" y1="198.5" x2="760.4" y2="477" stroke="#ffffff" stroke-width="1" stroke-dasharray="2 1" opacity="0.9"/>
<line x1="710.58" y1="170.5" x2="742.9" y2="497" stroke="#202000" stroke-width="33.6" stroke-linecap="round"/>
<line x1="710.58" y1="170.5" x2="742.9" y2="497" stroke="url(#hR)" stroke-width="32.4" stroke-linecap="round"/>
<path d="M722.5 474 Q718.5 490 720 502 Q724 512 736 514 Q750 514 755.5 505 Q759 496 758 476Z" fill="url(#rbBot)"/>
<path d="M722.5 474 Q718.5 490 720 502 Q724 512 736 514 Q750 514 755.5 505 Q759 496 758 476" fill="none" stroke="#1a1a00" stroke-width="0.8"/>
<path d="M390.5 312.5 Q396.5 316 397.5 326 L394 329Z" fill="#202010"/>
<path d="M382 478 Q381 500 387 507.5 Q394 512.5 400.5 508 Q405.5 501 401 486 L398 476Z" fill="#d0d000"/>
<line x1="384.1" y1="318.2" x2="390.3" y2="501" stroke="#1e2000" stroke-width="19.4" stroke-linecap="round"/>
<line x1="384.1" y1="318.2" x2="390.3" y2="501" stroke="url(#hL)" stroke-width="18.4" stroke-linecap="round"/>
<path d="M382 478 Q381 500 387 507.5 Q394 512.5 400.5 508 Q405.5 501 401 486 L398 476Z" fill="url(#lbBot)"/>
<path d="M381.5 492 Q382 503 387 507.5 Q394 512.5 400.5 508 Q405.5 501 401 486 L399 480" fill="none" stroke="#1a1a00" stroke-width="0.8"/>
</g></svg>
</body></html>
